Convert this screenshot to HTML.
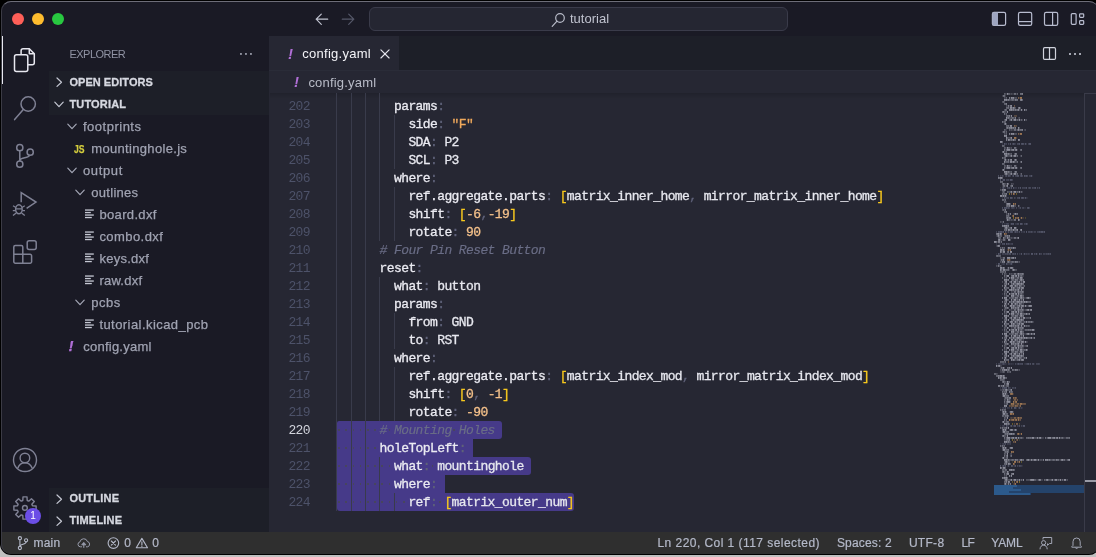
<!DOCTYPE html>
<html lang="en">
<head>
<meta charset="utf-8">
<title>config.yaml — tutorial</title>
<style>
*{box-sizing:border-box;margin:0;padding:0}
html,body{width:1096px;height:557px;overflow:hidden}
body{position:relative;background:linear-gradient(to bottom,#000 0,#000 300px,#c0c0c0 300px,#c0c0c0 557px);font-family:"Liberation Sans",sans-serif;font-size:13px;color:#c5c8d3;-webkit-font-smoothing:antialiased}
.abs{position:absolute}
#win{position:absolute;left:1px;top:1px;width:1098px;height:553px;border-radius:10px 10px 10px 10px;overflow:hidden;background:#262733;box-shadow:0 0 0 1px #000}
#winborder{position:absolute;left:1px;top:1px;width:1098px;height:553px;border-radius:10px;border-top:1px solid #6d6d78;border-left:1px solid #3b3b45;pointer-events:none}
/* all children of #win positioned relative to page coordinates by offsetting -1,-1 */
#pg{position:absolute;left:-1px;top:-1px;width:1096px;height:557px;will-change:transform}
#title{left:0;top:0;width:1096px;height:36px;background:#1a1a25}
.tl{position:absolute;top:13px;width:12px;height:12px;border-radius:50%}
#search{left:369px;top:7px;width:419px;height:24px;border:1px solid #3a3b4a;border-radius:6px;background:#252632}
#search span{position:absolute;left:200px;top:3px;font-size:13px;color:#c0c3cf}
#activity{left:0;top:36px;width:48px;height:496px;background:#1a1a25}
#side{left:48px;top:36px;width:221px;height:496px;background:#1a1a25}
.sechdr{position:absolute;left:49px;width:220px;height:22px;background:#1d1f28;font-size:11px;font-weight:bold;color:#d6d8e0;line-height:22px;letter-spacing:0.1px;-webkit-text-stroke:0.3px}
.sechdr span{position:absolute;left:20.400px}
.row{position:absolute;left:48px;width:222px;height:22px;line-height:22px;font-size:13px;color:#a0a3b2;white-space:nowrap;-webkit-text-stroke:0.25px}
.row span{position:absolute;top:0}
#tabbar{left:269px;top:36px;width:827px;height:34px;background:#1d1f28}
#tab{left:269px;top:36px;width:130px;height:34px;background:#262733}
#bread{left:269px;top:70px;width:827px;height:23px;background:#262733}
#editor{left:269px;top:93px;width:827px;height:439px;background:#262733;overflow:hidden}
#ed{position:absolute;left:-269px;top:-93px;width:1096px;height:557px;font-family:"Liberation Mono",monospace;font-size:13px;letter-spacing:-0.6px;line-height:18px}
.ln{position:absolute;left:269.5px;width:40.5px;text-align:right;color:#4d5269;height:18px;white-space:pre;transform:translateY(0.8px)}
.ln.cur{color:#d2d4dc}
.cl{position:absolute;height:18px;white-space:pre;color:#d4d6e0;transform:translateY(0.8px);-webkit-text-stroke:0.3px}
.k{color:#ebebf2}.g{color:#5f627a}.p{color:#e6e7ee}.s{color:#f0a95c}.n{color:#f4c08a}.b{color:#f7c81e}.c{color:#6a6d86;font-style:italic;-webkit-text-stroke:0.15px}
.ig{position:absolute;width:1px;height:18px;background:#393b4b}
.sel{position:absolute;left:336.5px;height:18px;background:#463a89;border-radius:3px}
.wd{position:absolute;width:1.8px;height:1.8px;background:#47455e}
#status{left:0;top:532px;width:1096px;height:22px;background:#2f2f2f;font-size:12px;color:#b4b9c9;line-height:22px;-webkit-text-stroke:0.2px}
#status span{position:absolute;top:0;white-space:nowrap}
svg{position:absolute;overflow:visible}
</style>
</head>
<body>
<div id="win"><div id="pg">

<!-- title bar -->
<div id="title" class="abs">
  <div class="tl" style="left:12px;background:#fe5f58"></div>
  <div class="tl" style="left:32px;background:#febc2e"></div>
  <div class="tl" style="left:52px;background:#28c840"></div>
  <svg style="left:314px;top:11px" width="16" height="16" viewBox="0 0 16 16" fill="none" stroke="#c0c3d0" stroke-width="1.2" stroke-linecap="round" stroke-linejoin="round"><path d="M7.300 3.100 2.200 8.200 7.300 13.300M2.200 8.200h11.500"/></svg>
  <svg style="left:340px;top:11px" width="16" height="16" viewBox="0 0 16 16" fill="none" stroke="#555869" stroke-width="1.2" stroke-linecap="round" stroke-linejoin="round"><path d="M8.700 3.100 13.800 8.200 8.700 13.300M13.800 8.200h-11.500"/></svg>
  <div id="search" class="abs">
    <svg style="left:181px;top:4px" width="16" height="16" viewBox="0 0 16 16" fill="none" stroke="#b8bbc8" stroke-width="1.2"><circle cx="9" cy="6" r="4.300"/><path d="M6 9.200 1.200 14.300" stroke-linecap="round"/></svg>
    <span>tutorial</span>
  </div>
  <!-- layout icons -->
  <svg style="left:991px;top:11px" width="16" height="16" viewBox="0 0 16 16" fill="none" stroke="#b9bdd0" stroke-width="1.2"><rect x="1.400" y="1.400" width="13.200" height="13" rx="1.600"/><path d="M1.400 2.600a1.200 1.200 0 0 1 1.200-1.200H7v13H2.600a1.200 1.200 0 0 1-1.200-1.200z" fill="#9ea5c0" stroke="none"/></svg>
  <svg style="left:1017px;top:11px" width="16" height="16" viewBox="0 0 16 16" fill="none" stroke="#b9bdd0" stroke-width="1.200"><rect x="1.500" y="1.400" width="13.200" height="13" rx="1.600"/><path d="M1.500 10.600h13.200"/></svg>
  <svg style="left:1043px;top:11px" width="16" height="16" viewBox="0 0 16 16" fill="none" stroke="#b9bdd0" stroke-width="1.200"><rect x="1.500" y="1.400" width="13.200" height="13" rx="1.600"/><path d="M9.600 1.400v13"/></svg>
  <svg style="left:1070px;top:11px" width="16" height="16" viewBox="0 0 16 16" fill="none" stroke="#b9bdd0" stroke-width="1.200"><rect x="1.300" y="2.600" width="4.800" height="10.700" rx="1"/><rect x="9.600" y="2.800" width="4.100" height="3.600" rx="0.800"/><rect x="9.600" y="9.700" width="4.100" height="3.600" rx="0.800"/></svg>
</div>

<!-- activity bar -->
<div id="activity" class="abs"></div>
<div class="abs" style="left:1px;top:36px;width:2px;height:48px;background:#e8e8f0"></div>
<!-- explorer icon -->
<svg style="left:12px;top:48px" width="24" height="24" viewBox="0 0 24 24" fill="none" stroke="#e8e8f0" stroke-width="1.500" stroke-linejoin="round"><path d="M9.100 6.800V2.800a2 2 0 0 1 2-2H17.300L22.300 5.800V14.700a2 2 0 0 1-2 2H15.800"/><path d="M17.300 0.800V5.800H22.300"/><rect x="2.500" y="6.800" width="13.300" height="16.800" rx="2"/></svg>
<!-- search icon -->
<svg style="left:12px;top:96px" width="24" height="24" viewBox="0 0 24 24" fill="none" stroke="#7f8194" stroke-width="1.500"><circle cx="16.200" cy="8" r="7.200"/><path d="M11.300 13.400 2.600 23.600" stroke-linecap="round"/></svg>
<!-- scm icon -->
<svg style="left:12px;top:144px" width="24" height="24" viewBox="0 0 24 24" fill="none" stroke="#7f8194" stroke-width="1.500"><circle cx="7.800" cy="3.700" r="3.100"/><circle cx="7.800" cy="20.200" r="3.100"/><circle cx="18.200" cy="8.200" r="3.100"/><path d="M7.800 6.800V17.100M17.600 11.300C16.600 14 12 13.500 9.600 14.700 8.500 15.300 7.800 16 7.800 17.100"/></svg>
<!-- debug icon -->
<svg style="left:12px;top:192px" width="24" height="24" viewBox="0 0 24 24" fill="none" stroke="#7f8194" stroke-width="1.500" stroke-linejoin="miter"><path d="M9.200 10.300V0.600L24 10 14.600 16.300"/><ellipse cx="6.900" cy="17.300" rx="3.300" ry="4.500" stroke-width="1.400"/><path d="M3.700 16.800H10.100M1 13.800 3.900 15.500M0.800 18.600H3.600M1 23.600 4.200 20.900M12.800 13.800 9.900 15.500M13 18.600H10.200M12.800 23.600 9.600 20.900" stroke-width="1.300"/></svg>
<!-- extensions icon -->
<svg style="left:12px;top:240px" width="24" height="24" viewBox="0 0 24 24" fill="none" stroke="#7f8194" stroke-width="1.500" stroke-linejoin="round"><path d="M3.300 5.400H9.300a1.500 1.500 0 0 1 1.500 1.500V14.300H18.100a1.500 1.500 0 0 1 1.500 1.500V21.700a1.500 1.500 0 0 1-1.500 1.500H3.300a1.500 1.500 0 0 1-1.500-1.500V6.900a1.500 1.500 0 0 1 1.500-1.500zM1.800 14.300H10.800V23.200"/><rect x="15.200" y="0.700" width="9" height="8.800" rx="2"/></svg>
<!-- account icon -->
<svg style="left:12px;top:448px" width="26" height="24" viewBox="0 0 26 24" fill="none" stroke="#7f8194" stroke-width="1.400"><circle cx="13" cy="12" r="11.500"/><circle cx="12.900" cy="10" r="4.800"/><path d="M5.600 20.600C7 16.800 10 14.800 12.900 14.800S18.800 16.800 20.400 20.600"/></svg>
<!-- gear icon -->
<svg style="left:12px;top:496px" width="26" height="24" viewBox="0 0 26 24" fill="none" stroke="#7f8194" stroke-width="1.400" stroke-linejoin="round"><circle cx="12.900" cy="11.900" r="2.400"/><path d="M10.80 4.52 11.00 0.880 15.00 0.880 15.20 4.520 16.730 5.150 19.450 2.720 22.280 5.550 19.850 8.270 20.480 9.800 24.120 10.00 24.120 14.00 20.480 14.200 19.850 15.730 22.280 18.450 19.450 21.280 16.730 18.850 15.200 19.480 15.00 23.120 11.00 23.120 10.80 19.480 9.270 18.850 6.550 21.280 3.720 18.450 6.150 15.730 5.520 14.200 1.880 14.00 1.880 10.00 5.520 9.800 6.150 8.270 3.720 5.550 6.550 2.720 9.270 5.150z"/></svg>
<div class="abs" style="left:25px;top:508px;width:16px;height:16px;border-radius:50%;background:#6b4ee6;color:#fff;font-size:10px;text-align:center;line-height:16px">1</div>

<!-- sidebar -->
<div id="side" class="abs"></div>
<div class="abs" style="left:69.400px;top:47px;font-size:11px;color:#9093a3;line-height:14px;letter-spacing:-0.500px">EXPLORER</div>
<svg style="left:238px;top:46px" width="16" height="16" viewBox="0 0 16 16" fill="#a9acba"><rect x="2.100" y="7.100" width="1.700" height="1.700"/><rect x="7.100" y="7.100" width="1.700" height="1.700"/><rect x="12.100" y="7.100" width="1.700" height="1.700"/></svg>

<div class="sechdr" style="top:71px"><span style="letter-spacing:0.050px">OPEN EDITORS</span></div>
<div class="sechdr" style="top:93px"><span style="letter-spacing:0.180px">TUTORIAL</span></div>
<div class="sechdr" style="top:488px;height:22px;line-height:21px"><span style="letter-spacing:0.240px">OUTLINE</span></div>
<div class="sechdr" style="top:510px;height:22px;line-height:21px"><span style="letter-spacing:0.180px">TIMELINE</span></div>
<!-- chevrons for headers -->
<svg style="left:51px;top:74px" width="16" height="16" viewBox="0 0 16 16" fill="none" stroke="#c5c8d3" stroke-width="1.200" stroke-linecap="round" stroke-linejoin="round"><path d="M6 4 10.500 8.200 6 12.400"/></svg>
<svg style="left:51px;top:96px" width="16" height="16" viewBox="0 0 16 16" fill="none" stroke="#c5c8d3" stroke-width="1.200" stroke-linecap="round" stroke-linejoin="round"><path d="M3.800 6.200 8 10.700 12.200 6.200"/></svg>
<svg style="left:51px;top:491px" width="16" height="16" viewBox="0 0 16 16" fill="none" stroke="#c5c8d3" stroke-width="1.200" stroke-linecap="round" stroke-linejoin="round"><path d="M6 4 10.500 8.200 6 12.400"/></svg>
<svg style="left:51px;top:513px" width="16" height="16" viewBox="0 0 16 16" fill="none" stroke="#c5c8d3" stroke-width="1.200" stroke-linecap="round" stroke-linejoin="round"><path d="M6 4 10.500 8.200 6 12.400"/></svg>

<!-- tree -->
<div class="row" style="top:116px"><span style="left:35px;letter-spacing:0.500px">footprints</span></div>
<div class="row" style="top:138px"><span style="left:25.500px;font-size:11px;font-weight:bold;color:#d4cd3e;transform:scaleX(0.780);transform-origin:0 50%">JS</span><span style="left:43.300px;letter-spacing:0.320px">mountinghole.js</span></div>
<div class="row" style="top:160px"><span style="left:35px;letter-spacing:0.630px">output</span></div>
<div class="row" style="top:182px"><span style="left:43.300px;letter-spacing:0.280px">outlines</span></div>
<div class="row" style="top:204px"><span style="left:51.400px;letter-spacing:0.350px">board.dxf</span></div>
<div class="row" style="top:226px"><span style="left:51.400px;letter-spacing:0.440px">combo.dxf</span></div>
<div class="row" style="top:248px"><span style="left:51.400px;letter-spacing:0.270px">keys.dxf</span></div>
<div class="row" style="top:270px"><span style="left:51.400px;letter-spacing:0.250px">raw.dxf</span></div>
<div class="row" style="top:292px"><span style="left:43.300px;letter-spacing:0.500px">pcbs</span></div>
<div class="row" style="top:314px"><span style="left:51.400px;letter-spacing:0.440px">tutorial.kicad_pcb</span></div>
<div class="row" style="top:336px"><span style="left:20.500px;top:-1px;color:#b06fd6;font-style:italic;font-weight:bold;font-size:15px">!</span><span style="left:35.300px;letter-spacing:0.230px">config.yaml</span></div>
<!-- tree chevrons -->
<svg style="left:64px;top:118px" width="16" height="16" viewBox="0 0 16 16" fill="none" stroke="#a4a7b6" stroke-width="1.200" stroke-linecap="round" stroke-linejoin="round"><path d="M3.800 6.200 8 10.700 12.200 6.200"/></svg>
<svg style="left:64px;top:162px" width="16" height="16" viewBox="0 0 16 16" fill="none" stroke="#a4a7b6" stroke-width="1.200" stroke-linecap="round" stroke-linejoin="round"><path d="M3.800 6.200 8 10.700 12.200 6.200"/></svg>
<svg style="left:72px;top:184px" width="16" height="16" viewBox="0 0 16 16" fill="none" stroke="#a4a7b6" stroke-width="1.200" stroke-linecap="round" stroke-linejoin="round"><path d="M3.800 6.200 8 10.700 12.200 6.200"/></svg>
<svg style="left:72px;top:294px" width="16" height="16" viewBox="0 0 16 16" fill="none" stroke="#a4a7b6" stroke-width="1.200" stroke-linecap="round" stroke-linejoin="round"><path d="M3.800 6.200 8 10.700 12.200 6.200"/></svg>
<!-- file icons (lines) -->
<svg style="left:84.500px;top:209px" width="10" height="10" viewBox="0 0 10 10" fill="#c5c8d3"><rect x="0" y="0.400" width="8.800" height="1.300"/><rect x="0" y="2.900" width="5.800" height="1.300"/><rect x="0" y="5.400" width="8.800" height="1.300"/><rect x="0" y="7.900" width="6.800" height="1.300"/></svg>
<svg style="left:84.500px;top:231px" width="10" height="10" viewBox="0 0 10 10" fill="#c5c8d3"><rect x="0" y="0.400" width="8.800" height="1.300"/><rect x="0" y="2.900" width="5.800" height="1.300"/><rect x="0" y="5.400" width="8.800" height="1.300"/><rect x="0" y="7.900" width="6.800" height="1.300"/></svg>
<svg style="left:84.500px;top:253px" width="10" height="10" viewBox="0 0 10 10" fill="#c5c8d3"><rect x="0" y="0.400" width="8.800" height="1.300"/><rect x="0" y="2.900" width="5.800" height="1.300"/><rect x="0" y="5.400" width="8.800" height="1.300"/><rect x="0" y="7.900" width="6.800" height="1.300"/></svg>
<svg style="left:84.500px;top:275px" width="10" height="10" viewBox="0 0 10 10" fill="#c5c8d3"><rect x="0" y="0.400" width="8.800" height="1.300"/><rect x="0" y="2.900" width="5.800" height="1.300"/><rect x="0" y="5.400" width="8.800" height="1.300"/><rect x="0" y="7.900" width="6.800" height="1.300"/></svg>
<svg style="left:84.500px;top:319px" width="10" height="10" viewBox="0 0 10 10" fill="#c5c8d3"><rect x="0" y="0.400" width="8.800" height="1.300"/><rect x="0" y="2.900" width="5.800" height="1.300"/><rect x="0" y="5.400" width="8.800" height="1.300"/><rect x="0" y="7.900" width="6.800" height="1.300"/></svg>

<!-- tab bar -->
<div id="tabbar" class="abs"></div>
<div id="tab" class="abs">
  <span class="abs" style="left:19px;top:9.500px;color:#b06fd6;font-style:italic;font-weight:bold;font-size:15px;line-height:16px">!</span>
  <span class="abs" style="left:33.300px;top:9px;color:#f4f4f8;font-size:13px;line-height:17px;letter-spacing:0.270px">config.yaml</span>
  <svg style="left:108px;top:10px" width="16" height="16" viewBox="0 0 16 16" fill="none" stroke="#e6e6ee" stroke-width="1.150" stroke-linecap="round"><path d="M3.900 3.800l8.200 8.200M12.100 3.800l-8.200 8.200"/></svg>
</div>
<svg style="left:1041px;top:45px" width="16" height="16" viewBox="0 0 16 16" fill="none" stroke="#d0d2dc" stroke-width="1.200"><rect x="2.500" y="2.700" width="12" height="11.700" rx="1.200"/><path d="M8.500 2.700v11.700"/></svg>
<svg style="left:1067px;top:46px" width="16" height="16" viewBox="0 0 16 16" fill="#c5c8d4"><rect x="2.100" y="7.100" width="1.800" height="1.800"/><rect x="7.100" y="7.100" width="1.800" height="1.800"/><rect x="12.100" y="7.100" width="1.800" height="1.800"/></svg>

<!-- breadcrumb -->
<div id="bread" class="abs">
  <span class="abs" style="left:25px;top:4px;color:#b06fd6;font-style:italic;font-weight:bold;font-size:15px;line-height:16px">!</span>
  <span class="abs" style="left:39.400px;top:4px;color:#b9bcc8;font-size:13px;line-height:17px;letter-spacing:0.200px">config.yaml</span>
</div>

<div class="abs" style="left:269px;top:70px;width:827px;height:1px;background:#2a2c38"></div>
<!-- editor -->
<div id="editor" class="abs"><div id="ed">
<div class="abs" style="left:270px;top:93px;width:814px;height:6px;background:linear-gradient(to bottom,rgba(0,0,0,0.14),rgba(0,0,0,0))"></div>
<div class="ig" style="left:336.1px;top:79px"></div>
<div class="ig" style="left:350.5px;top:79px"></div>
<div class="ig" style="left:364.9px;top:79px"></div>
<div class="ig" style="left:379.3px;top:79px"></div>
<div class="ig" style="left:336.1px;top:97px"></div>
<div class="ig" style="left:350.5px;top:97px"></div>
<div class="ig" style="left:364.9px;top:97px"></div>
<div class="ig" style="left:379.3px;top:97px"></div>
<div class="ln" style="top:97px">202</div>
<div class="cl" style="top:97px;left:394.0px"><span class="k">params</span><span class="g">:</span></div>
<div class="ig" style="left:336.1px;top:115px"></div>
<div class="ig" style="left:350.5px;top:115px"></div>
<div class="ig" style="left:364.9px;top:115px"></div>
<div class="ig" style="left:379.3px;top:115px"></div>
<div class="ig" style="left:393.7px;top:115px"></div>
<div class="ln" style="top:115px">203</div>
<div class="cl" style="top:115px;left:408.4px"><span class="k">side</span><span class="g">:</span><span class="p"> </span><span class="s">&quot;F&quot;</span></div>
<div class="ig" style="left:336.1px;top:133px"></div>
<div class="ig" style="left:350.5px;top:133px"></div>
<div class="ig" style="left:364.9px;top:133px"></div>
<div class="ig" style="left:379.3px;top:133px"></div>
<div class="ig" style="left:393.7px;top:133px"></div>
<div class="ln" style="top:133px">204</div>
<div class="cl" style="top:133px;left:408.4px"><span class="k">SDA</span><span class="g">:</span><span class="p"> P2</span></div>
<div class="ig" style="left:336.1px;top:151px"></div>
<div class="ig" style="left:350.5px;top:151px"></div>
<div class="ig" style="left:364.9px;top:151px"></div>
<div class="ig" style="left:379.3px;top:151px"></div>
<div class="ig" style="left:393.7px;top:151px"></div>
<div class="ln" style="top:151px">205</div>
<div class="cl" style="top:151px;left:408.4px"><span class="k">SCL</span><span class="g">:</span><span class="p"> P3</span></div>
<div class="ig" style="left:336.1px;top:169px"></div>
<div class="ig" style="left:350.5px;top:169px"></div>
<div class="ig" style="left:364.9px;top:169px"></div>
<div class="ig" style="left:379.3px;top:169px"></div>
<div class="ln" style="top:169px">206</div>
<div class="cl" style="top:169px;left:394.0px"><span class="k">where</span><span class="g">:</span></div>
<div class="ig" style="left:336.1px;top:187px"></div>
<div class="ig" style="left:350.5px;top:187px"></div>
<div class="ig" style="left:364.9px;top:187px"></div>
<div class="ig" style="left:379.3px;top:187px"></div>
<div class="ig" style="left:393.7px;top:187px"></div>
<div class="ln" style="top:187px">207</div>
<div class="cl" style="top:187px;left:408.4px"><span class="k">ref.aggregate.parts</span><span class="g">:</span><span class="p"> </span><span class="b">[</span><span class="p">matrix_inner_home</span><span class="g">,</span><span class="p"> mirror_matrix_inner_home</span><span class="b">]</span></div>
<div class="ig" style="left:336.1px;top:205px"></div>
<div class="ig" style="left:350.5px;top:205px"></div>
<div class="ig" style="left:364.9px;top:205px"></div>
<div class="ig" style="left:379.3px;top:205px"></div>
<div class="ig" style="left:393.7px;top:205px"></div>
<div class="ln" style="top:205px">208</div>
<div class="cl" style="top:205px;left:408.4px"><span class="k">shift</span><span class="g">:</span><span class="p"> </span><span class="b">[</span><span class="n">-6</span><span class="g">,</span><span class="n">-19</span><span class="b">]</span></div>
<div class="ig" style="left:336.1px;top:223px"></div>
<div class="ig" style="left:350.5px;top:223px"></div>
<div class="ig" style="left:364.9px;top:223px"></div>
<div class="ig" style="left:379.3px;top:223px"></div>
<div class="ig" style="left:393.7px;top:223px"></div>
<div class="ln" style="top:223px">209</div>
<div class="cl" style="top:223px;left:408.4px"><span class="k">rotate</span><span class="g">:</span><span class="p"> </span><span class="n">90</span></div>
<div class="ig" style="left:336.1px;top:241px"></div>
<div class="ig" style="left:350.5px;top:241px"></div>
<div class="ig" style="left:364.9px;top:241px"></div>
<div class="ln" style="top:241px">210</div>
<div class="cl" style="top:241px;left:379.6px"><span class="c"># Four Pin Reset Button</span></div>
<div class="ig" style="left:336.1px;top:259px"></div>
<div class="ig" style="left:350.5px;top:259px"></div>
<div class="ig" style="left:364.9px;top:259px"></div>
<div class="ln" style="top:259px">211</div>
<div class="cl" style="top:259px;left:379.6px"><span class="k">reset</span><span class="g">:</span></div>
<div class="ig" style="left:336.1px;top:277px"></div>
<div class="ig" style="left:350.5px;top:277px"></div>
<div class="ig" style="left:364.9px;top:277px"></div>
<div class="ig" style="left:379.3px;top:277px"></div>
<div class="ln" style="top:277px">212</div>
<div class="cl" style="top:277px;left:394.0px"><span class="k">what</span><span class="g">:</span><span class="p"> button</span></div>
<div class="ig" style="left:336.1px;top:295px"></div>
<div class="ig" style="left:350.5px;top:295px"></div>
<div class="ig" style="left:364.9px;top:295px"></div>
<div class="ig" style="left:379.3px;top:295px"></div>
<div class="ln" style="top:295px">213</div>
<div class="cl" style="top:295px;left:394.0px"><span class="k">params</span><span class="g">:</span></div>
<div class="ig" style="left:336.1px;top:313px"></div>
<div class="ig" style="left:350.5px;top:313px"></div>
<div class="ig" style="left:364.9px;top:313px"></div>
<div class="ig" style="left:379.3px;top:313px"></div>
<div class="ig" style="left:393.7px;top:313px"></div>
<div class="ln" style="top:313px">214</div>
<div class="cl" style="top:313px;left:408.4px"><span class="k">from</span><span class="g">:</span><span class="p"> GND</span></div>
<div class="ig" style="left:336.1px;top:331px"></div>
<div class="ig" style="left:350.5px;top:331px"></div>
<div class="ig" style="left:364.9px;top:331px"></div>
<div class="ig" style="left:379.3px;top:331px"></div>
<div class="ig" style="left:393.7px;top:331px"></div>
<div class="ln" style="top:331px">215</div>
<div class="cl" style="top:331px;left:408.4px"><span class="k">to</span><span class="g">:</span><span class="p"> RST</span></div>
<div class="ig" style="left:336.1px;top:349px"></div>
<div class="ig" style="left:350.5px;top:349px"></div>
<div class="ig" style="left:364.9px;top:349px"></div>
<div class="ig" style="left:379.3px;top:349px"></div>
<div class="ln" style="top:349px">216</div>
<div class="cl" style="top:349px;left:394.0px"><span class="k">where</span><span class="g">:</span></div>
<div class="ig" style="left:336.1px;top:367px"></div>
<div class="ig" style="left:350.5px;top:367px"></div>
<div class="ig" style="left:364.9px;top:367px"></div>
<div class="ig" style="left:379.3px;top:367px"></div>
<div class="ig" style="left:393.7px;top:367px"></div>
<div class="ln" style="top:367px">217</div>
<div class="cl" style="top:367px;left:408.4px"><span class="k">ref.aggregate.parts</span><span class="g">:</span><span class="p"> </span><span class="b">[</span><span class="p">matrix_index_mod</span><span class="g">,</span><span class="p"> mirror_matrix_index_mod</span><span class="b">]</span></div>
<div class="ig" style="left:336.1px;top:385px"></div>
<div class="ig" style="left:350.5px;top:385px"></div>
<div class="ig" style="left:364.9px;top:385px"></div>
<div class="ig" style="left:379.3px;top:385px"></div>
<div class="ig" style="left:393.7px;top:385px"></div>
<div class="ln" style="top:385px">218</div>
<div class="cl" style="top:385px;left:408.4px"><span class="k">shift</span><span class="g">:</span><span class="p"> </span><span class="b">[</span><span class="n">0</span><span class="g">,</span><span class="p"> </span><span class="n">-1</span><span class="b">]</span></div>
<div class="ig" style="left:336.1px;top:403px"></div>
<div class="ig" style="left:350.5px;top:403px"></div>
<div class="ig" style="left:364.9px;top:403px"></div>
<div class="ig" style="left:379.3px;top:403px"></div>
<div class="ig" style="left:393.7px;top:403px"></div>
<div class="ln" style="top:403px">219</div>
<div class="cl" style="top:403px;left:408.4px"><span class="k">rotate</span><span class="g">:</span><span class="p"> </span><span class="n">-90</span></div>
<div class="sel" style="top:421px;width:165.6px;border-radius:2px 3px 3px 0"></div>
<i class="wd" style="left:338.1px;top:429.1px"></i>
<i class="wd" style="left:345.3px;top:429.1px"></i>
<i class="wd" style="left:352.5px;top:429.1px"></i>
<i class="wd" style="left:359.7px;top:429.1px"></i>
<i class="wd" style="left:366.9px;top:429.1px"></i>
<i class="wd" style="left:374.1px;top:429.1px"></i>
<i class="wd" style="left:388.5px;top:429.1px"></i>
<i class="wd" style="left:453.3px;top:429.1px"></i>
<div class="ig" style="left:336.1px;top:421px"></div>
<div class="ig" style="left:350.5px;top:421px"></div>
<div class="ig" style="left:364.9px;top:421px"></div>
<div class="ln cur" style="top:421px">220</div>
<div class="cl" style="top:421px;left:379.6px"><span class="c"># Mounting Holes</span></div>
<div class="sel" style="top:439px;width:136.8px;border-radius:0"></div>
<i class="wd" style="left:338.1px;top:447.1px"></i>
<i class="wd" style="left:345.3px;top:447.1px"></i>
<i class="wd" style="left:352.5px;top:447.1px"></i>
<i class="wd" style="left:359.7px;top:447.1px"></i>
<i class="wd" style="left:366.9px;top:447.1px"></i>
<i class="wd" style="left:374.1px;top:447.1px"></i>
<div class="ig" style="left:336.1px;top:439px"></div>
<div class="ig" style="left:350.5px;top:439px"></div>
<div class="ig" style="left:364.9px;top:439px"></div>
<div class="ln" style="top:439px">221</div>
<div class="cl" style="top:439px;left:379.6px"><span class="k">holeTopLeft</span><span class="g">:</span></div>
<div class="sel" style="top:457px;width:194.4px;border-radius:0 3px 3px 0"></div>
<i class="wd" style="left:338.1px;top:465.1px"></i>
<i class="wd" style="left:345.3px;top:465.1px"></i>
<i class="wd" style="left:352.5px;top:465.1px"></i>
<i class="wd" style="left:359.7px;top:465.1px"></i>
<i class="wd" style="left:366.9px;top:465.1px"></i>
<i class="wd" style="left:374.1px;top:465.1px"></i>
<i class="wd" style="left:381.3px;top:465.1px"></i>
<i class="wd" style="left:388.5px;top:465.1px"></i>
<i class="wd" style="left:431.7px;top:465.1px"></i>
<div class="ig" style="left:336.1px;top:457px"></div>
<div class="ig" style="left:350.5px;top:457px"></div>
<div class="ig" style="left:364.9px;top:457px"></div>
<div class="ig" style="left:379.3px;top:457px"></div>
<div class="ln" style="top:457px">222</div>
<div class="cl" style="top:457px;left:394.0px"><span class="k">what</span><span class="g">:</span><span class="p"> mountinghole</span></div>
<div class="sel" style="top:475px;width:108.0px;border-radius:0"></div>
<i class="wd" style="left:338.1px;top:483.1px"></i>
<i class="wd" style="left:345.3px;top:483.1px"></i>
<i class="wd" style="left:352.5px;top:483.1px"></i>
<i class="wd" style="left:359.7px;top:483.1px"></i>
<i class="wd" style="left:366.9px;top:483.1px"></i>
<i class="wd" style="left:374.1px;top:483.1px"></i>
<i class="wd" style="left:381.3px;top:483.1px"></i>
<i class="wd" style="left:388.5px;top:483.1px"></i>
<div class="ig" style="left:336.1px;top:475px"></div>
<div class="ig" style="left:350.5px;top:475px"></div>
<div class="ig" style="left:364.9px;top:475px"></div>
<div class="ig" style="left:379.3px;top:475px"></div>
<div class="ln" style="top:475px">223</div>
<div class="cl" style="top:475px;left:394.0px"><span class="k">where</span><span class="g">:</span></div>
<div class="sel" style="top:493px;width:237.6px;border-radius:0 3px 3px 3px"></div>
<i class="wd" style="left:338.1px;top:501.1px"></i>
<i class="wd" style="left:345.3px;top:501.1px"></i>
<i class="wd" style="left:352.5px;top:501.1px"></i>
<i class="wd" style="left:359.7px;top:501.1px"></i>
<i class="wd" style="left:366.9px;top:501.1px"></i>
<i class="wd" style="left:374.1px;top:501.1px"></i>
<i class="wd" style="left:381.3px;top:501.1px"></i>
<i class="wd" style="left:388.5px;top:501.1px"></i>
<i class="wd" style="left:395.7px;top:501.1px"></i>
<i class="wd" style="left:402.9px;top:501.1px"></i>
<i class="wd" style="left:438.9px;top:501.1px"></i>
<div class="ig" style="left:336.1px;top:493px"></div>
<div class="ig" style="left:350.5px;top:493px"></div>
<div class="ig" style="left:364.9px;top:493px"></div>
<div class="ig" style="left:379.3px;top:493px"></div>
<div class="ig" style="left:393.7px;top:493px"></div>
<div class="ln" style="top:493px">224</div>
<div class="cl" style="top:493px;left:408.4px"><span class="k">ref</span><span class="g">:</span><span class="p"> </span><span class="b">[</span><span class="p">matrix_outer_num</span><span class="b">]</span></div>
</div></div>

<!-- minimap -->
<svg style="left:0;top:0" width="1096" height="557" viewBox="0 0 1096 557">
<rect x="994" y="483" width="90" height="10" fill="#2b3a55" opacity="0.0"/>
<rect x="994" y="485" width="90" height="8" fill="#24436b"/>
<rect x="994" y="493" width="37" height="2" fill="#24436b"/>
<defs><pattern id="mmn" x="994" y="93" width="41" height="18" patternUnits="userSpaceOnUse"><rect x="0" y="0" width="1" height="2" fill="#fff" opacity="0.6"/><rect x="1" y="0" width="1" height="2" fill="#fff" opacity="0.6"/><rect x="2" y="0" width="1" height="2" fill="#fff" opacity="0.6"/><rect x="3" y="0" width="1" height="2" fill="#fff" opacity="0.7"/><rect x="4" y="0" width="1" height="2" fill="#fff" opacity="0.55"/><rect x="5" y="0" width="1" height="2" fill="#fff" opacity="0.6"/><rect x="6" y="0" width="1" height="2" fill="#fff" opacity="0.55"/><rect x="7" y="0" width="1" height="2" fill="#fff" opacity="0.4"/><rect x="8" y="0" width="1" height="2" fill="#fff" opacity="0.6"/><rect x="9" y="0" width="1" height="2" fill="#fff" opacity="0.85"/><rect x="10" y="0" width="1" height="2" fill="#fff" opacity="0.55"/><rect x="11" y="0" width="1" height="2" fill="#fff" opacity="0.4"/><rect x="12" y="0" width="1" height="2" fill="#fff" opacity="0.25"/><rect x="13" y="0" width="1" height="2" fill="#fff" opacity="1.0"/><rect x="14" y="0" width="1" height="2" fill="#fff" opacity="0.6"/><rect x="15" y="0" width="1" height="2" fill="#fff" opacity="0.55"/><rect x="16" y="0" width="1" height="2" fill="#fff" opacity="0.25"/><rect x="17" y="0" width="1" height="2" fill="#fff" opacity="0.4"/><rect x="18" y="0" width="1" height="2" fill="#fff" opacity="0.25"/><rect x="19" y="0" width="1" height="2" fill="#fff" opacity="0.25"/><rect x="20" y="0" width="1" height="2" fill="#fff" opacity="0.7"/><rect x="21" y="0" width="1" height="2" fill="#fff" opacity="0.7"/><rect x="22" y="0" width="1" height="2" fill="#fff" opacity="0.25"/><rect x="23" y="0" width="1" height="2" fill="#fff" opacity="0.6"/><rect x="24" y="0" width="1" height="2" fill="#fff" opacity="1.0"/><rect x="25" y="0" width="1" height="2" fill="#fff" opacity="0.6"/><rect x="26" y="0" width="1" height="2" fill="#fff" opacity="0.7"/><rect x="27" y="0" width="1" height="2" fill="#fff" opacity="0.7"/><rect x="28" y="0" width="1" height="2" fill="#fff" opacity="0.85"/><rect x="29" y="0" width="1" height="2" fill="#fff" opacity="0.6"/><rect x="30" y="0" width="1" height="2" fill="#fff" opacity="0.25"/><rect x="31" y="0" width="1" height="2" fill="#fff" opacity="0.4"/><rect x="32" y="0" width="1" height="2" fill="#fff" opacity="0.6"/><rect x="33" y="0" width="1" height="2" fill="#fff" opacity="0.85"/><rect x="34" y="0" width="1" height="2" fill="#fff" opacity="1.0"/><rect x="35" y="0" width="1" height="2" fill="#fff" opacity="0.4"/><rect x="36" y="0" width="1" height="2" fill="#fff" opacity="0.85"/><rect x="37" y="0" width="1" height="2" fill="#fff" opacity="1.0"/><rect x="38" y="0" width="1" height="2" fill="#fff" opacity="0.7"/><rect x="39" y="0" width="1" height="2" fill="#fff" opacity="0.85"/><rect x="40" y="0" width="1" height="2" fill="#fff" opacity="0.25"/><rect x="0" y="2" width="1" height="2" fill="#fff" opacity="0.4"/><rect x="1" y="2" width="1" height="2" fill="#fff" opacity="0.4"/><rect x="2" y="2" width="1" height="2" fill="#fff" opacity="1.0"/><rect x="3" y="2" width="1" height="2" fill="#fff" opacity="0.4"/><rect x="4" y="2" width="1" height="2" fill="#fff" opacity="0.85"/><rect x="5" y="2" width="1" height="2" fill="#fff" opacity="1.0"/><rect x="6" y="2" width="1" height="2" fill="#fff" opacity="0.4"/><rect x="7" y="2" width="1" height="2" fill="#fff" opacity="0.25"/><rect x="8" y="2" width="1" height="2" fill="#fff" opacity="0.25"/><rect x="9" y="2" width="1" height="2" fill="#fff" opacity="0.7"/><rect x="10" y="2" width="1" height="2" fill="#fff" opacity="0.7"/><rect x="11" y="2" width="1" height="2" fill="#fff" opacity="0.25"/><rect x="12" y="2" width="1" height="2" fill="#fff" opacity="0.6"/><rect x="13" y="2" width="1" height="2" fill="#fff" opacity="1.0"/><rect x="14" y="2" width="1" height="2" fill="#fff" opacity="1.0"/><rect x="15" y="2" width="1" height="2" fill="#fff" opacity="1.0"/><rect x="16" y="2" width="1" height="2" fill="#fff" opacity="0.4"/><rect x="17" y="2" width="1" height="2" fill="#fff" opacity="0.7"/><rect x="18" y="2" width="1" height="2" fill="#fff" opacity="0.85"/><rect x="19" y="2" width="1" height="2" fill="#fff" opacity="1.0"/><rect x="20" y="2" width="1" height="2" fill="#fff" opacity="0.4"/><rect x="21" y="2" width="1" height="2" fill="#fff" opacity="0.85"/><rect x="22" y="2" width="1" height="2" fill="#fff" opacity="1.0"/><rect x="23" y="2" width="1" height="2" fill="#fff" opacity="0.25"/><rect x="24" y="2" width="1" height="2" fill="#fff" opacity="1.0"/><rect x="25" y="2" width="1" height="2" fill="#fff" opacity="0.4"/><rect x="26" y="2" width="1" height="2" fill="#fff" opacity="0.55"/><rect x="27" y="2" width="1" height="2" fill="#fff" opacity="0.7"/><rect x="28" y="2" width="1" height="2" fill="#fff" opacity="0.4"/><rect x="29" y="2" width="1" height="2" fill="#fff" opacity="0.25"/><rect x="30" y="2" width="1" height="2" fill="#fff" opacity="0.25"/><rect x="31" y="2" width="1" height="2" fill="#fff" opacity="0.6"/><rect x="32" y="2" width="1" height="2" fill="#fff" opacity="0.6"/><rect x="33" y="2" width="1" height="2" fill="#fff" opacity="0.55"/><rect x="34" y="2" width="1" height="2" fill="#fff" opacity="0.7"/><rect x="35" y="2" width="1" height="2" fill="#fff" opacity="0.6"/><rect x="36" y="2" width="1" height="2" fill="#fff" opacity="0.7"/><rect x="37" y="2" width="1" height="2" fill="#fff" opacity="0.55"/><rect x="38" y="2" width="1" height="2" fill="#fff" opacity="1.0"/><rect x="39" y="2" width="1" height="2" fill="#fff" opacity="1.0"/><rect x="40" y="2" width="1" height="2" fill="#fff" opacity="0.4"/><rect x="0" y="4" width="1" height="2" fill="#fff" opacity="1.0"/><rect x="1" y="4" width="1" height="2" fill="#fff" opacity="1.0"/><rect x="2" y="4" width="1" height="2" fill="#fff" opacity="0.7"/><rect x="3" y="4" width="1" height="2" fill="#fff" opacity="0.25"/><rect x="4" y="4" width="1" height="2" fill="#fff" opacity="0.85"/><rect x="5" y="4" width="1" height="2" fill="#fff" opacity="0.85"/><rect x="6" y="4" width="1" height="2" fill="#fff" opacity="0.25"/><rect x="7" y="4" width="1" height="2" fill="#fff" opacity="0.7"/><rect x="8" y="4" width="1" height="2" fill="#fff" opacity="0.55"/><rect x="9" y="4" width="1" height="2" fill="#fff" opacity="1.0"/><rect x="10" y="4" width="1" height="2" fill="#fff" opacity="0.4"/><rect x="11" y="4" width="1" height="2" fill="#fff" opacity="0.25"/><rect x="12" y="4" width="1" height="2" fill="#fff" opacity="0.55"/><rect x="13" y="4" width="1" height="2" fill="#fff" opacity="0.7"/><rect x="14" y="4" width="1" height="2" fill="#fff" opacity="0.6"/><rect x="15" y="4" width="1" height="2" fill="#fff" opacity="0.85"/><rect x="16" y="4" width="1" height="2" fill="#fff" opacity="0.25"/><rect x="17" y="4" width="1" height="2" fill="#fff" opacity="1.0"/><rect x="18" y="4" width="1" height="2" fill="#fff" opacity="0.85"/><rect x="19" y="4" width="1" height="2" fill="#fff" opacity="1.0"/><rect x="20" y="4" width="1" height="2" fill="#fff" opacity="0.4"/><rect x="21" y="4" width="1" height="2" fill="#fff" opacity="0.4"/><rect x="22" y="4" width="1" height="2" fill="#fff" opacity="0.4"/><rect x="23" y="4" width="1" height="2" fill="#fff" opacity="0.7"/><rect x="24" y="4" width="1" height="2" fill="#fff" opacity="0.7"/><rect x="25" y="4" width="1" height="2" fill="#fff" opacity="0.25"/><rect x="26" y="4" width="1" height="2" fill="#fff" opacity="1.0"/><rect x="27" y="4" width="1" height="2" fill="#fff" opacity="1.0"/><rect x="28" y="4" width="1" height="2" fill="#fff" opacity="0.6"/><rect x="29" y="4" width="1" height="2" fill="#fff" opacity="0.55"/><rect x="30" y="4" width="1" height="2" fill="#fff" opacity="0.6"/><rect x="31" y="4" width="1" height="2" fill="#fff" opacity="0.55"/><rect x="32" y="4" width="1" height="2" fill="#fff" opacity="1.0"/><rect x="33" y="4" width="1" height="2" fill="#fff" opacity="0.55"/><rect x="34" y="4" width="1" height="2" fill="#fff" opacity="0.55"/><rect x="35" y="4" width="1" height="2" fill="#fff" opacity="0.85"/><rect x="36" y="4" width="1" height="2" fill="#fff" opacity="0.7"/><rect x="37" y="4" width="1" height="2" fill="#fff" opacity="0.7"/><rect x="38" y="4" width="1" height="2" fill="#fff" opacity="0.7"/><rect x="39" y="4" width="1" height="2" fill="#fff" opacity="0.55"/><rect x="40" y="4" width="1" height="2" fill="#fff" opacity="0.7"/><rect x="0" y="6" width="1" height="2" fill="#fff" opacity="1.0"/><rect x="1" y="6" width="1" height="2" fill="#fff" opacity="0.6"/><rect x="2" y="6" width="1" height="2" fill="#fff" opacity="0.4"/><rect x="3" y="6" width="1" height="2" fill="#fff" opacity="1.0"/><rect x="4" y="6" width="1" height="2" fill="#fff" opacity="0.25"/><rect x="5" y="6" width="1" height="2" fill="#fff" opacity="0.4"/><rect x="6" y="6" width="1" height="2" fill="#fff" opacity="0.4"/><rect x="7" y="6" width="1" height="2" fill="#fff" opacity="0.25"/><rect x="8" y="6" width="1" height="2" fill="#fff" opacity="0.85"/><rect x="9" y="6" width="1" height="2" fill="#fff" opacity="0.7"/><rect x="10" y="6" width="1" height="2" fill="#fff" opacity="1.0"/><rect x="11" y="6" width="1" height="2" fill="#fff" opacity="0.85"/><rect x="12" y="6" width="1" height="2" fill="#fff" opacity="1.0"/><rect x="13" y="6" width="1" height="2" fill="#fff" opacity="0.6"/><rect x="14" y="6" width="1" height="2" fill="#fff" opacity="0.85"/><rect x="15" y="6" width="1" height="2" fill="#fff" opacity="0.55"/><rect x="16" y="6" width="1" height="2" fill="#fff" opacity="0.4"/><rect x="17" y="6" width="1" height="2" fill="#fff" opacity="0.55"/><rect x="18" y="6" width="1" height="2" fill="#fff" opacity="0.7"/><rect x="19" y="6" width="1" height="2" fill="#fff" opacity="0.6"/><rect x="20" y="6" width="1" height="2" fill="#fff" opacity="0.4"/><rect x="21" y="6" width="1" height="2" fill="#fff" opacity="0.85"/><rect x="22" y="6" width="1" height="2" fill="#fff" opacity="0.7"/><rect x="23" y="6" width="1" height="2" fill="#fff" opacity="0.7"/><rect x="24" y="6" width="1" height="2" fill="#fff" opacity="0.25"/><rect x="25" y="6" width="1" height="2" fill="#fff" opacity="0.4"/><rect x="26" y="6" width="1" height="2" fill="#fff" opacity="0.85"/><rect x="27" y="6" width="1" height="2" fill="#fff" opacity="1.0"/><rect x="28" y="6" width="1" height="2" fill="#fff" opacity="0.6"/><rect x="29" y="6" width="1" height="2" fill="#fff" opacity="0.7"/><rect x="30" y="6" width="1" height="2" fill="#fff" opacity="0.25"/><rect x="31" y="6" width="1" height="2" fill="#fff" opacity="0.25"/><rect x="32" y="6" width="1" height="2" fill="#fff" opacity="0.55"/><rect x="33" y="6" width="1" height="2" fill="#fff" opacity="0.85"/><rect x="34" y="6" width="1" height="2" fill="#fff" opacity="1.0"/><rect x="35" y="6" width="1" height="2" fill="#fff" opacity="0.55"/><rect x="36" y="6" width="1" height="2" fill="#fff" opacity="0.4"/><rect x="37" y="6" width="1" height="2" fill="#fff" opacity="1.0"/><rect x="38" y="6" width="1" height="2" fill="#fff" opacity="0.55"/><rect x="39" y="6" width="1" height="2" fill="#fff" opacity="0.6"/><rect x="40" y="6" width="1" height="2" fill="#fff" opacity="1.0"/><rect x="0" y="8" width="1" height="2" fill="#fff" opacity="0.55"/><rect x="1" y="8" width="1" height="2" fill="#fff" opacity="0.25"/><rect x="2" y="8" width="1" height="2" fill="#fff" opacity="0.25"/><rect x="3" y="8" width="1" height="2" fill="#fff" opacity="0.6"/><rect x="4" y="8" width="1" height="2" fill="#fff" opacity="1.0"/><rect x="5" y="8" width="1" height="2" fill="#fff" opacity="0.85"/><rect x="6" y="8" width="1" height="2" fill="#fff" opacity="0.25"/><rect x="7" y="8" width="1" height="2" fill="#fff" opacity="0.25"/><rect x="8" y="8" width="1" height="2" fill="#fff" opacity="0.4"/><rect x="9" y="8" width="1" height="2" fill="#fff" opacity="0.6"/><rect x="10" y="8" width="1" height="2" fill="#fff" opacity="0.4"/><rect x="11" y="8" width="1" height="2" fill="#fff" opacity="0.85"/><rect x="12" y="8" width="1" height="2" fill="#fff" opacity="1.0"/><rect x="13" y="8" width="1" height="2" fill="#fff" opacity="0.55"/><rect x="14" y="8" width="1" height="2" fill="#fff" opacity="0.4"/><rect x="15" y="8" width="1" height="2" fill="#fff" opacity="0.4"/><rect x="16" y="8" width="1" height="2" fill="#fff" opacity="0.6"/><rect x="17" y="8" width="1" height="2" fill="#fff" opacity="1.0"/><rect x="18" y="8" width="1" height="2" fill="#fff" opacity="0.25"/><rect x="19" y="8" width="1" height="2" fill="#fff" opacity="0.55"/><rect x="20" y="8" width="1" height="2" fill="#fff" opacity="1.0"/><rect x="21" y="8" width="1" height="2" fill="#fff" opacity="1.0"/><rect x="22" y="8" width="1" height="2" fill="#fff" opacity="0.4"/><rect x="23" y="8" width="1" height="2" fill="#fff" opacity="0.6"/><rect x="24" y="8" width="1" height="2" fill="#fff" opacity="0.4"/><rect x="25" y="8" width="1" height="2" fill="#fff" opacity="1.0"/><rect x="26" y="8" width="1" height="2" fill="#fff" opacity="0.25"/><rect x="27" y="8" width="1" height="2" fill="#fff" opacity="0.6"/><rect x="28" y="8" width="1" height="2" fill="#fff" opacity="0.25"/><rect x="29" y="8" width="1" height="2" fill="#fff" opacity="1.0"/><rect x="30" y="8" width="1" height="2" fill="#fff" opacity="1.0"/><rect x="31" y="8" width="1" height="2" fill="#fff" opacity="0.25"/><rect x="32" y="8" width="1" height="2" fill="#fff" opacity="0.4"/><rect x="33" y="8" width="1" height="2" fill="#fff" opacity="0.4"/><rect x="34" y="8" width="1" height="2" fill="#fff" opacity="0.4"/><rect x="35" y="8" width="1" height="2" fill="#fff" opacity="0.4"/><rect x="36" y="8" width="1" height="2" fill="#fff" opacity="0.85"/><rect x="37" y="8" width="1" height="2" fill="#fff" opacity="1.0"/><rect x="38" y="8" width="1" height="2" fill="#fff" opacity="1.0"/><rect x="39" y="8" width="1" height="2" fill="#fff" opacity="1.0"/><rect x="40" y="8" width="1" height="2" fill="#fff" opacity="0.6"/><rect x="0" y="10" width="1" height="2" fill="#fff" opacity="0.6"/><rect x="1" y="10" width="1" height="2" fill="#fff" opacity="0.6"/><rect x="2" y="10" width="1" height="2" fill="#fff" opacity="0.4"/><rect x="3" y="10" width="1" height="2" fill="#fff" opacity="0.25"/><rect x="4" y="10" width="1" height="2" fill="#fff" opacity="0.85"/><rect x="5" y="10" width="1" height="2" fill="#fff" opacity="0.4"/><rect x="6" y="10" width="1" height="2" fill="#fff" opacity="0.6"/><rect x="7" y="10" width="1" height="2" fill="#fff" opacity="0.25"/><rect x="8" y="10" width="1" height="2" fill="#fff" opacity="0.7"/><rect x="9" y="10" width="1" height="2" fill="#fff" opacity="0.4"/><rect x="10" y="10" width="1" height="2" fill="#fff" opacity="0.6"/><rect x="11" y="10" width="1" height="2" fill="#fff" opacity="0.6"/><rect x="12" y="10" width="1" height="2" fill="#fff" opacity="0.85"/><rect x="13" y="10" width="1" height="2" fill="#fff" opacity="0.25"/><rect x="14" y="10" width="1" height="2" fill="#fff" opacity="1.0"/><rect x="15" y="10" width="1" height="2" fill="#fff" opacity="0.85"/><rect x="16" y="10" width="1" height="2" fill="#fff" opacity="0.55"/><rect x="17" y="10" width="1" height="2" fill="#fff" opacity="0.7"/><rect x="18" y="10" width="1" height="2" fill="#fff" opacity="0.55"/><rect x="19" y="10" width="1" height="2" fill="#fff" opacity="1.0"/><rect x="20" y="10" width="1" height="2" fill="#fff" opacity="0.6"/><rect x="21" y="10" width="1" height="2" fill="#fff" opacity="0.6"/><rect x="22" y="10" width="1" height="2" fill="#fff" opacity="0.7"/><rect x="23" y="10" width="1" height="2" fill="#fff" opacity="1.0"/><rect x="24" y="10" width="1" height="2" fill="#fff" opacity="1.0"/><rect x="25" y="10" width="1" height="2" fill="#fff" opacity="0.85"/><rect x="26" y="10" width="1" height="2" fill="#fff" opacity="0.7"/><rect x="27" y="10" width="1" height="2" fill="#fff" opacity="1.0"/><rect x="28" y="10" width="1" height="2" fill="#fff" opacity="0.7"/><rect x="29" y="10" width="1" height="2" fill="#fff" opacity="0.7"/><rect x="30" y="10" width="1" height="2" fill="#fff" opacity="1.0"/><rect x="31" y="10" width="1" height="2" fill="#fff" opacity="0.7"/><rect x="32" y="10" width="1" height="2" fill="#fff" opacity="1.0"/><rect x="33" y="10" width="1" height="2" fill="#fff" opacity="0.7"/><rect x="34" y="10" width="1" height="2" fill="#fff" opacity="0.55"/><rect x="35" y="10" width="1" height="2" fill="#fff" opacity="0.55"/><rect x="36" y="10" width="1" height="2" fill="#fff" opacity="0.6"/><rect x="37" y="10" width="1" height="2" fill="#fff" opacity="1.0"/><rect x="38" y="10" width="1" height="2" fill="#fff" opacity="0.25"/><rect x="39" y="10" width="1" height="2" fill="#fff" opacity="0.4"/><rect x="40" y="10" width="1" height="2" fill="#fff" opacity="0.85"/><rect x="0" y="12" width="1" height="2" fill="#fff" opacity="0.55"/><rect x="1" y="12" width="1" height="2" fill="#fff" opacity="0.4"/><rect x="2" y="12" width="1" height="2" fill="#fff" opacity="0.6"/><rect x="3" y="12" width="1" height="2" fill="#fff" opacity="0.6"/><rect x="4" y="12" width="1" height="2" fill="#fff" opacity="0.85"/><rect x="5" y="12" width="1" height="2" fill="#fff" opacity="0.7"/><rect x="6" y="12" width="1" height="2" fill="#fff" opacity="1.0"/><rect x="7" y="12" width="1" height="2" fill="#fff" opacity="1.0"/><rect x="8" y="12" width="1" height="2" fill="#fff" opacity="0.6"/><rect x="9" y="12" width="1" height="2" fill="#fff" opacity="1.0"/><rect x="10" y="12" width="1" height="2" fill="#fff" opacity="0.6"/><rect x="11" y="12" width="1" height="2" fill="#fff" opacity="1.0"/><rect x="12" y="12" width="1" height="2" fill="#fff" opacity="0.4"/><rect x="13" y="12" width="1" height="2" fill="#fff" opacity="0.25"/><rect x="14" y="12" width="1" height="2" fill="#fff" opacity="0.85"/><rect x="15" y="12" width="1" height="2" fill="#fff" opacity="0.25"/><rect x="16" y="12" width="1" height="2" fill="#fff" opacity="0.85"/><rect x="17" y="12" width="1" height="2" fill="#fff" opacity="1.0"/><rect x="18" y="12" width="1" height="2" fill="#fff" opacity="0.85"/><rect x="19" y="12" width="1" height="2" fill="#fff" opacity="0.25"/><rect x="20" y="12" width="1" height="2" fill="#fff" opacity="0.55"/><rect x="21" y="12" width="1" height="2" fill="#fff" opacity="1.0"/><rect x="22" y="12" width="1" height="2" fill="#fff" opacity="0.6"/><rect x="23" y="12" width="1" height="2" fill="#fff" opacity="0.7"/><rect x="24" y="12" width="1" height="2" fill="#fff" opacity="0.25"/><rect x="25" y="12" width="1" height="2" fill="#fff" opacity="0.85"/><rect x="26" y="12" width="1" height="2" fill="#fff" opacity="0.7"/><rect x="27" y="12" width="1" height="2" fill="#fff" opacity="0.55"/><rect x="28" y="12" width="1" height="2" fill="#fff" opacity="0.25"/><rect x="29" y="12" width="1" height="2" fill="#fff" opacity="0.4"/><rect x="30" y="12" width="1" height="2" fill="#fff" opacity="0.6"/><rect x="31" y="12" width="1" height="2" fill="#fff" opacity="0.4"/><rect x="32" y="12" width="1" height="2" fill="#fff" opacity="1.0"/><rect x="33" y="12" width="1" height="2" fill="#fff" opacity="0.4"/><rect x="34" y="12" width="1" height="2" fill="#fff" opacity="0.7"/><rect x="35" y="12" width="1" height="2" fill="#fff" opacity="0.7"/><rect x="36" y="12" width="1" height="2" fill="#fff" opacity="0.6"/><rect x="37" y="12" width="1" height="2" fill="#fff" opacity="0.85"/><rect x="38" y="12" width="1" height="2" fill="#fff" opacity="0.55"/><rect x="39" y="12" width="1" height="2" fill="#fff" opacity="0.25"/><rect x="40" y="12" width="1" height="2" fill="#fff" opacity="0.6"/><rect x="0" y="14" width="1" height="2" fill="#fff" opacity="0.25"/><rect x="1" y="14" width="1" height="2" fill="#fff" opacity="0.55"/><rect x="2" y="14" width="1" height="2" fill="#fff" opacity="0.7"/><rect x="3" y="14" width="1" height="2" fill="#fff" opacity="0.85"/><rect x="4" y="14" width="1" height="2" fill="#fff" opacity="1.0"/><rect x="5" y="14" width="1" height="2" fill="#fff" opacity="0.55"/><rect x="6" y="14" width="1" height="2" fill="#fff" opacity="1.0"/><rect x="7" y="14" width="1" height="2" fill="#fff" opacity="0.7"/><rect x="8" y="14" width="1" height="2" fill="#fff" opacity="0.4"/><rect x="9" y="14" width="1" height="2" fill="#fff" opacity="1.0"/><rect x="10" y="14" width="1" height="2" fill="#fff" opacity="1.0"/><rect x="11" y="14" width="1" height="2" fill="#fff" opacity="0.55"/><rect x="12" y="14" width="1" height="2" fill="#fff" opacity="0.6"/><rect x="13" y="14" width="1" height="2" fill="#fff" opacity="0.6"/><rect x="14" y="14" width="1" height="2" fill="#fff" opacity="0.7"/><rect x="15" y="14" width="1" height="2" fill="#fff" opacity="0.25"/><rect x="16" y="14" width="1" height="2" fill="#fff" opacity="1.0"/><rect x="17" y="14" width="1" height="2" fill="#fff" opacity="1.0"/><rect x="18" y="14" width="1" height="2" fill="#fff" opacity="0.6"/><rect x="19" y="14" width="1" height="2" fill="#fff" opacity="1.0"/><rect x="20" y="14" width="1" height="2" fill="#fff" opacity="0.7"/><rect x="21" y="14" width="1" height="2" fill="#fff" opacity="0.4"/><rect x="22" y="14" width="1" height="2" fill="#fff" opacity="0.4"/><rect x="23" y="14" width="1" height="2" fill="#fff" opacity="0.7"/><rect x="24" y="14" width="1" height="2" fill="#fff" opacity="0.7"/><rect x="25" y="14" width="1" height="2" fill="#fff" opacity="1.0"/><rect x="26" y="14" width="1" height="2" fill="#fff" opacity="0.4"/><rect x="27" y="14" width="1" height="2" fill="#fff" opacity="0.85"/><rect x="28" y="14" width="1" height="2" fill="#fff" opacity="1.0"/><rect x="29" y="14" width="1" height="2" fill="#fff" opacity="0.85"/><rect x="30" y="14" width="1" height="2" fill="#fff" opacity="0.25"/><rect x="31" y="14" width="1" height="2" fill="#fff" opacity="1.0"/><rect x="32" y="14" width="1" height="2" fill="#fff" opacity="0.4"/><rect x="33" y="14" width="1" height="2" fill="#fff" opacity="0.25"/><rect x="34" y="14" width="1" height="2" fill="#fff" opacity="0.6"/><rect x="35" y="14" width="1" height="2" fill="#fff" opacity="1.0"/><rect x="36" y="14" width="1" height="2" fill="#fff" opacity="1.0"/><rect x="37" y="14" width="1" height="2" fill="#fff" opacity="0.85"/><rect x="38" y="14" width="1" height="2" fill="#fff" opacity="0.6"/><rect x="39" y="14" width="1" height="2" fill="#fff" opacity="0.25"/><rect x="40" y="14" width="1" height="2" fill="#fff" opacity="0.7"/><rect x="0" y="16" width="1" height="2" fill="#fff" opacity="0.4"/><rect x="1" y="16" width="1" height="2" fill="#fff" opacity="1.0"/><rect x="2" y="16" width="1" height="2" fill="#fff" opacity="0.25"/><rect x="3" y="16" width="1" height="2" fill="#fff" opacity="0.55"/><rect x="4" y="16" width="1" height="2" fill="#fff" opacity="1.0"/><rect x="5" y="16" width="1" height="2" fill="#fff" opacity="0.55"/><rect x="6" y="16" width="1" height="2" fill="#fff" opacity="0.6"/><rect x="7" y="16" width="1" height="2" fill="#fff" opacity="0.55"/><rect x="8" y="16" width="1" height="2" fill="#fff" opacity="0.6"/><rect x="9" y="16" width="1" height="2" fill="#fff" opacity="0.6"/><rect x="10" y="16" width="1" height="2" fill="#fff" opacity="0.4"/><rect x="11" y="16" width="1" height="2" fill="#fff" opacity="0.7"/><rect x="12" y="16" width="1" height="2" fill="#fff" opacity="0.6"/><rect x="13" y="16" width="1" height="2" fill="#fff" opacity="0.85"/><rect x="14" y="16" width="1" height="2" fill="#fff" opacity="0.55"/><rect x="15" y="16" width="1" height="2" fill="#fff" opacity="0.85"/><rect x="16" y="16" width="1" height="2" fill="#fff" opacity="0.85"/><rect x="17" y="16" width="1" height="2" fill="#fff" opacity="1.0"/><rect x="18" y="16" width="1" height="2" fill="#fff" opacity="0.7"/><rect x="19" y="16" width="1" height="2" fill="#fff" opacity="0.85"/><rect x="20" y="16" width="1" height="2" fill="#fff" opacity="0.55"/><rect x="21" y="16" width="1" height="2" fill="#fff" opacity="0.85"/><rect x="22" y="16" width="1" height="2" fill="#fff" opacity="0.6"/><rect x="23" y="16" width="1" height="2" fill="#fff" opacity="0.7"/><rect x="24" y="16" width="1" height="2" fill="#fff" opacity="1.0"/><rect x="25" y="16" width="1" height="2" fill="#fff" opacity="0.4"/><rect x="26" y="16" width="1" height="2" fill="#fff" opacity="0.25"/><rect x="27" y="16" width="1" height="2" fill="#fff" opacity="1.0"/><rect x="28" y="16" width="1" height="2" fill="#fff" opacity="0.25"/><rect x="29" y="16" width="1" height="2" fill="#fff" opacity="0.25"/><rect x="30" y="16" width="1" height="2" fill="#fff" opacity="1.0"/><rect x="31" y="16" width="1" height="2" fill="#fff" opacity="0.4"/><rect x="32" y="16" width="1" height="2" fill="#fff" opacity="0.6"/><rect x="33" y="16" width="1" height="2" fill="#fff" opacity="0.4"/><rect x="34" y="16" width="1" height="2" fill="#fff" opacity="0.55"/><rect x="35" y="16" width="1" height="2" fill="#fff" opacity="0.4"/><rect x="36" y="16" width="1" height="2" fill="#fff" opacity="0.6"/><rect x="37" y="16" width="1" height="2" fill="#fff" opacity="1.0"/><rect x="38" y="16" width="1" height="2" fill="#fff" opacity="1.0"/><rect x="39" y="16" width="1" height="2" fill="#fff" opacity="0.85"/><rect x="40" y="16" width="1" height="2" fill="#fff" opacity="0.7"/></pattern><mask id="mmk" maskUnits="userSpaceOnUse" x="994" y="93" width="90" height="410"><rect x="994" y="93" width="90" height="410" fill="url(#mmn)"/></mask></defs>
<g mask="url(#mmk)">
<rect x="1004" y="93.2" width="14" height="1.5" fill="#c9ccd8" opacity="0.78"/>
<rect x="1020" y="93.2" width="3" height="1.5" fill="#c9ccd8" opacity="0.78"/>
<rect x="1002" y="95.2" width="4" height="1.5" fill="#c9ccd8" opacity="0.78"/>
<rect x="1004" y="97.2" width="3" height="1.5" fill="#c9ccd8" opacity="0.78"/>
<rect x="1009" y="97.2" width="8" height="1.5" fill="#c9ccd8" opacity="0.78"/>
<rect x="1018" y="97.2" width="4" height="1.5" fill="#e9a968" opacity="0.75"/>
<rect x="1004" y="99.2" width="14" height="1.5" fill="#c9ccd8" opacity="0.78"/>
<rect x="1020" y="99.2" width="3" height="1.5" fill="#c9ccd8" opacity="0.78"/>
<rect x="1002" y="101.2" width="3" height="1.5" fill="#c9ccd8" opacity="0.78"/>
<rect x="1004" y="103.2" width="3" height="1.5" fill="#c9ccd8" opacity="0.78"/>
<rect x="1006" y="105.2" width="6" height="1.5" fill="#c9ccd8" opacity="0.78"/>
<rect x="1014" y="105.2" width="1" height="1.5" fill="#e9a968" opacity="0.75"/>
<rect x="1006" y="107.2" width="10" height="1.5" fill="#c9ccd8" opacity="0.78"/>
<rect x="1018" y="107.2" width="3" height="1.5" fill="#c9ccd8" opacity="0.78"/>
<rect x="1004" y="109.2" width="3" height="1.5" fill="#c9ccd8" opacity="0.78"/>
<rect x="1009" y="109.2" width="14" height="1.5" fill="#c9ccd8" opacity="0.78"/>
<rect x="1024" y="109.2" width="3" height="1.5" fill="#c9ccd8" opacity="0.78"/>
<rect x="1002" y="111.2" width="6" height="1.5" fill="#c9ccd8" opacity="0.78"/>
<rect x="1004" y="113.2" width="3" height="1.5" fill="#c9ccd8" opacity="0.78"/>
<rect x="1006" y="115.2" width="6" height="1.5" fill="#c9ccd8" opacity="0.78"/>
<rect x="1014" y="115.2" width="3" height="1.5" fill="#e9a968" opacity="0.75"/>
<rect x="1006" y="117.2" width="10" height="1.5" fill="#c9ccd8" opacity="0.78"/>
<rect x="1018" y="117.2" width="2" height="1.5" fill="#c9ccd8" opacity="0.78"/>
<rect x="1004" y="119.2" width="3" height="1.5" fill="#c9ccd8" opacity="0.78"/>
<rect x="1009" y="119.2" width="14" height="1.5" fill="#c9ccd8" opacity="0.78"/>
<rect x="1024" y="119.2" width="3" height="1.5" fill="#c9ccd8" opacity="0.78"/>
<rect x="1002" y="121.2" width="4" height="1.5" fill="#c9ccd8" opacity="0.78"/>
<rect x="1004" y="123.2" width="3" height="1.5" fill="#c9ccd8" opacity="0.78"/>
<rect x="1006" y="125.2" width="6" height="1.5" fill="#c9ccd8" opacity="0.78"/>
<rect x="1014" y="125.2" width="3" height="1.5" fill="#e9a968" opacity="0.75"/>
<rect x="1006" y="127.2" width="10" height="1.5" fill="#c9ccd8" opacity="0.78"/>
<rect x="1018" y="127.2" width="2" height="1.5" fill="#c9ccd8" opacity="0.78"/>
<rect x="1004" y="129.2" width="3" height="1.5" fill="#c9ccd8" opacity="0.78"/>
<rect x="1009" y="129.2" width="14" height="1.5" fill="#c9ccd8" opacity="0.78"/>
<rect x="1024" y="129.2" width="2" height="1.5" fill="#c9ccd8" opacity="0.78"/>
<rect x="1002" y="131.2" width="5" height="1.5" fill="#c9ccd8" opacity="0.78"/>
<rect x="1004" y="133.2" width="3" height="1.5" fill="#c9ccd8" opacity="0.78"/>
<rect x="1009" y="133.2" width="8" height="1.5" fill="#c9ccd8" opacity="0.78"/>
<rect x="1018" y="133.2" width="4" height="1.5" fill="#e9a968" opacity="0.75"/>
<rect x="1004" y="135.2" width="3" height="1.5" fill="#c9ccd8" opacity="0.78"/>
<rect x="1006" y="137.2" width="6" height="1.5" fill="#c9ccd8" opacity="0.78"/>
<rect x="1014" y="137.2" width="3" height="1.5" fill="#e9a968" opacity="0.75"/>
<rect x="1006" y="139.2" width="10" height="1.5" fill="#c9ccd8" opacity="0.78"/>
<rect x="1018" y="139.2" width="2" height="1.5" fill="#c9ccd8" opacity="0.78"/>
<rect x="1000" y="141.2" width="3" height="1.5" fill="#c9ccd8" opacity="0.78"/>
<rect x="1002" y="143.2" width="1" height="1.5" fill="#70758c" opacity="0.75"/>
<rect x="1004" y="143.2" width="3" height="1.5" fill="#70758c" opacity="0.75"/>
<rect x="1008" y="143.2" width="3" height="1.5" fill="#70758c" opacity="0.75"/>
<rect x="1012" y="143.2" width="4" height="1.5" fill="#70758c" opacity="0.75"/>
<rect x="1017" y="143.2" width="3" height="1.5" fill="#70758c" opacity="0.75"/>
<rect x="1021" y="143.2" width="6" height="1.5" fill="#70758c" opacity="0.75"/>
<rect x="1028" y="143.2" width="3" height="1.5" fill="#70758c" opacity="0.75"/>
<rect x="1002" y="145.2" width="3" height="1.5" fill="#c9ccd8" opacity="0.78"/>
<rect x="1004" y="147.2" width="8" height="1.5" fill="#c9ccd8" opacity="0.78"/>
<rect x="1014" y="147.2" width="3" height="1.5" fill="#c9ccd8" opacity="0.78"/>
<rect x="1004" y="149.2" width="14" height="1.5" fill="#c9ccd8" opacity="0.78"/>
<rect x="1020" y="149.2" width="2" height="1.5" fill="#c9ccd8" opacity="0.78"/>
<rect x="1002" y="151.2" width="5" height="1.5" fill="#c9ccd8" opacity="0.78"/>
<rect x="1004" y="153.2" width="8" height="1.5" fill="#c9ccd8" opacity="0.78"/>
<rect x="1014" y="153.2" width="3" height="1.5" fill="#c9ccd8" opacity="0.78"/>
<rect x="1004" y="155.2" width="14" height="1.5" fill="#c9ccd8" opacity="0.78"/>
<rect x="1020" y="155.2" width="2" height="1.5" fill="#c9ccd8" opacity="0.78"/>
<rect x="1002" y="157.2" width="4" height="1.5" fill="#c9ccd8" opacity="0.78"/>
<rect x="1004" y="159.2" width="8" height="1.5" fill="#c9ccd8" opacity="0.78"/>
<rect x="1014" y="159.2" width="3" height="1.5" fill="#c9ccd8" opacity="0.78"/>
<rect x="1004" y="161.2" width="14" height="1.5" fill="#c9ccd8" opacity="0.78"/>
<rect x="1020" y="161.2" width="2" height="1.5" fill="#c9ccd8" opacity="0.78"/>
<rect x="1002" y="163.2" width="3" height="1.5" fill="#c9ccd8" opacity="0.78"/>
<rect x="1004" y="165.2" width="8" height="1.5" fill="#c9ccd8" opacity="0.78"/>
<rect x="1014" y="165.2" width="3" height="1.5" fill="#c9ccd8" opacity="0.78"/>
<rect x="1004" y="167.2" width="14" height="1.5" fill="#c9ccd8" opacity="0.78"/>
<rect x="1020" y="167.2" width="2" height="1.5" fill="#c9ccd8" opacity="0.78"/>
<rect x="1002" y="169.2" width="3" height="1.5" fill="#c9ccd8" opacity="0.78"/>
<rect x="1004" y="171.2" width="8" height="1.5" fill="#c9ccd8" opacity="0.78"/>
<rect x="1014" y="171.2" width="3" height="1.5" fill="#c9ccd8" opacity="0.78"/>
<rect x="1004" y="173.2" width="14" height="1.5" fill="#c9ccd8" opacity="0.78"/>
<rect x="1020" y="173.2" width="2" height="1.5" fill="#c9ccd8" opacity="0.78"/>
<rect x="998" y="175.2" width="1" height="1.5" fill="#70758c" opacity="0.75"/>
<rect x="1000" y="175.2" width="4" height="1.5" fill="#70758c" opacity="0.75"/>
<rect x="1005" y="175.2" width="6" height="1.5" fill="#70758c" opacity="0.75"/>
<rect x="1012" y="175.2" width="2" height="1.5" fill="#70758c" opacity="0.75"/>
<rect x="1015" y="175.2" width="4" height="1.5" fill="#70758c" opacity="0.75"/>
<rect x="1020" y="175.2" width="3" height="1.5" fill="#70758c" opacity="0.75"/>
<rect x="1024" y="175.2" width="4" height="1.5" fill="#70758c" opacity="0.75"/>
<rect x="1029" y="175.2" width="4" height="1.5" fill="#70758c" opacity="0.75"/>
<rect x="998" y="177.2" width="5" height="1.5" fill="#c9ccd8" opacity="0.78"/>
<rect x="1000" y="179.2" width="1" height="1.5" fill="#70758c" opacity="0.75"/>
<rect x="1002" y="179.2" width="3" height="1.5" fill="#70758c" opacity="0.75"/>
<rect x="1006" y="179.2" width="7" height="1.5" fill="#70758c" opacity="0.75"/>
<rect x="1000" y="181.2" width="3" height="1.5" fill="#c9ccd8" opacity="0.78"/>
<rect x="1002" y="183.2" width="7" height="1.5" fill="#c9ccd8" opacity="0.78"/>
<rect x="1011" y="183.2" width="3" height="1.5" fill="#c9ccd8" opacity="0.78"/>
<rect x="1002" y="185.2" width="6" height="1.5" fill="#c9ccd8" opacity="0.78"/>
<rect x="1010" y="185.2" width="3" height="1.5" fill="#c9ccd8" opacity="0.78"/>
<rect x="1000" y="187.2" width="1" height="1.5" fill="#70758c" opacity="0.75"/>
<rect x="1002" y="187.2" width="4" height="1.5" fill="#70758c" opacity="0.75"/>
<rect x="1007" y="187.2" width="5" height="1.5" fill="#70758c" opacity="0.75"/>
<rect x="1013" y="187.2" width="4" height="1.5" fill="#70758c" opacity="0.75"/>
<rect x="1018" y="187.2" width="3" height="1.5" fill="#70758c" opacity="0.75"/>
<rect x="1022" y="187.2" width="5" height="1.5" fill="#70758c" opacity="0.75"/>
<rect x="1028" y="187.2" width="3" height="1.5" fill="#70758c" opacity="0.75"/>
<rect x="1032" y="187.2" width="4" height="1.5" fill="#70758c" opacity="0.75"/>
<rect x="1037" y="187.2" width="3" height="1.5" fill="#70758c" opacity="0.75"/>
<rect x="1000" y="189.2" width="6" height="1.5" fill="#c9ccd8" opacity="0.78"/>
<rect x="1002" y="191.2" width="3" height="1.5" fill="#c9ccd8" opacity="0.78"/>
<rect x="1007" y="191.2" width="16" height="1.5" fill="#c9ccd8" opacity="0.78"/>
<rect x="1002" y="193.2" width="5" height="1.5" fill="#c9ccd8" opacity="0.78"/>
<rect x="1009" y="193.2" width="1" height="1.5" fill="#f5cf1c" opacity="0.6"/>
<rect x="1011" y="193.2" width="1" height="1.5" fill="#e9a968" opacity="0.75"/>
<rect x="1013" y="193.2" width="2" height="1.5" fill="#e9a968" opacity="0.75"/>
<rect x="1016" y="193.2" width="1" height="1.5" fill="#f5cf1c" opacity="0.6"/>
<rect x="1000" y="195.2" width="7" height="1.5" fill="#c9ccd8" opacity="0.78"/>
<rect x="1002" y="197.2" width="1" height="1.5" fill="#70758c" opacity="0.75"/>
<rect x="1004" y="197.2" width="5" height="1.5" fill="#70758c" opacity="0.75"/>
<rect x="1010" y="197.2" width="3" height="1.5" fill="#70758c" opacity="0.75"/>
<rect x="1014" y="197.2" width="2" height="1.5" fill="#70758c" opacity="0.75"/>
<rect x="1017" y="197.2" width="3" height="1.5" fill="#70758c" opacity="0.75"/>
<rect x="1021" y="197.2" width="7" height="1.5" fill="#70758c" opacity="0.75"/>
<rect x="1002" y="199.2" width="4" height="1.5" fill="#c9ccd8" opacity="0.78"/>
<rect x="1004" y="201.2" width="3" height="1.5" fill="#c9ccd8" opacity="0.78"/>
<rect x="1006" y="203.2" width="5" height="1.5" fill="#c9ccd8" opacity="0.78"/>
<rect x="1013" y="203.2" width="3" height="1.5" fill="#e9a968" opacity="0.75"/>
<rect x="1006" y="205.2" width="10" height="1.5" fill="#c9ccd8" opacity="0.78"/>
<rect x="1018" y="205.2" width="2" height="1.5" fill="#c9ccd8" opacity="0.78"/>
<rect x="1002" y="207.2" width="1" height="1.5" fill="#70758c" opacity="0.75"/>
<rect x="1004" y="207.2" width="6" height="1.5" fill="#70758c" opacity="0.75"/>
<rect x="1011" y="207.2" width="4" height="1.5" fill="#70758c" opacity="0.75"/>
<rect x="1016" y="207.2" width="1" height="1.5" fill="#70758c" opacity="0.75"/>
<rect x="1018" y="207.2" width="3" height="1.5" fill="#70758c" opacity="0.75"/>
<rect x="1022" y="207.2" width="4" height="1.5" fill="#70758c" opacity="0.75"/>
<rect x="1027" y="207.2" width="3" height="1.5" fill="#70758c" opacity="0.75"/>
<rect x="1002" y="209.2" width="4" height="1.5" fill="#c9ccd8" opacity="0.78"/>
<rect x="1004" y="211.2" width="3" height="1.5" fill="#c9ccd8" opacity="0.78"/>
<rect x="1006" y="213.2" width="5" height="1.5" fill="#c9ccd8" opacity="0.78"/>
<rect x="1013" y="213.2" width="5" height="1.5" fill="#c9ccd8" opacity="0.78"/>
<rect x="1006" y="215.2" width="4" height="1.5" fill="#c9ccd8" opacity="0.78"/>
<rect x="1012" y="215.2" width="2" height="1.5" fill="#e9a968" opacity="0.75"/>
<rect x="1006" y="217.2" width="5" height="1.5" fill="#c9ccd8" opacity="0.78"/>
<rect x="1013" y="217.2" width="1" height="1.5" fill="#f5cf1c" opacity="0.6"/>
<rect x="1015" y="217.2" width="4" height="1.5" fill="#e9a968" opacity="0.75"/>
<rect x="1020" y="217.2" width="4" height="1.5" fill="#e9a968" opacity="0.75"/>
<rect x="1025" y="217.2" width="1" height="1.5" fill="#f5cf1c" opacity="0.6"/>
<rect x="1006" y="219.2" width="10" height="1.5" fill="#c9ccd8" opacity="0.78"/>
<rect x="1018" y="219.2" width="2" height="1.5" fill="#c9ccd8" opacity="0.78"/>
<rect x="1000" y="221.2" width="4" height="1.5" fill="#c9ccd8" opacity="0.78"/>
<rect x="1002" y="223.2" width="1" height="1.5" fill="#70758c" opacity="0.75"/>
<rect x="1004" y="223.2" width="5" height="1.5" fill="#70758c" opacity="0.75"/>
<rect x="1010" y="223.2" width="4" height="1.5" fill="#70758c" opacity="0.75"/>
<rect x="1015" y="223.2" width="4" height="1.5" fill="#70758c" opacity="0.75"/>
<rect x="1020" y="223.2" width="3" height="1.5" fill="#70758c" opacity="0.75"/>
<rect x="1024" y="223.2" width="4" height="1.5" fill="#70758c" opacity="0.75"/>
<rect x="1002" y="225.2" width="7" height="1.5" fill="#c9ccd8" opacity="0.78"/>
<rect x="1004" y="227.2" width="8" height="1.5" fill="#c9ccd8" opacity="0.78"/>
<rect x="1014" y="227.2" width="3" height="1.5" fill="#c9ccd8" opacity="0.78"/>
<rect x="1004" y="229.2" width="14" height="1.5" fill="#c9ccd8" opacity="0.78"/>
<rect x="1020" y="229.2" width="2" height="1.5" fill="#c9ccd8" opacity="0.78"/>
<rect x="996" y="231.2" width="1" height="1.5" fill="#70758c" opacity="0.75"/>
<rect x="998" y="231.2" width="6" height="1.5" fill="#70758c" opacity="0.75"/>
<rect x="1005" y="231.2" width="8" height="1.5" fill="#70758c" opacity="0.75"/>
<rect x="1014" y="231.2" width="6" height="1.5" fill="#70758c" opacity="0.75"/>
<rect x="1021" y="231.2" width="4" height="1.5" fill="#70758c" opacity="0.75"/>
<rect x="1026" y="231.2" width="1" height="1.5" fill="#70758c" opacity="0.75"/>
<rect x="1028" y="231.2" width="8" height="1.5" fill="#70758c" opacity="0.75"/>
<rect x="1037" y="231.2" width="8" height="1.5" fill="#70758c" opacity="0.75"/>
<rect x="996" y="233.2" width="6" height="1.5" fill="#c9ccd8" opacity="0.78"/>
<rect x="1004" y="233.2" width="3" height="1.5" fill="#e9a968" opacity="0.75"/>
<rect x="996" y="235.2" width="6" height="1.5" fill="#c9ccd8" opacity="0.78"/>
<rect x="1004" y="235.2" width="6" height="1.5" fill="#c9ccd8" opacity="0.78"/>
<rect x="998" y="237.2" width="3" height="1.5" fill="#c9ccd8" opacity="0.78"/>
<rect x="1003" y="237.2" width="16" height="1.5" fill="#c9ccd8" opacity="0.78"/>
<rect x="998" y="239.2" width="8" height="1.5" fill="#c9ccd8" opacity="0.78"/>
<rect x="1008" y="239.2" width="3" height="1.5" fill="#c9ccd8" opacity="0.78"/>
<rect x="994" y="241.2" width="8" height="1.5" fill="#c9ccd8" opacity="0.78"/>
<rect x="996" y="243.2" width="1" height="1.5" fill="#70758c" opacity="0.75"/>
<rect x="998" y="243.2" width="3" height="1.5" fill="#70758c" opacity="0.75"/>
<rect x="1002" y="243.2" width="3" height="1.5" fill="#70758c" opacity="0.75"/>
<rect x="1006" y="243.2" width="7" height="1.5" fill="#70758c" opacity="0.75"/>
<rect x="996" y="245.2" width="4" height="1.5" fill="#c9ccd8" opacity="0.78"/>
<rect x="1000" y="247.2" width="5" height="1.5" fill="#c9ccd8" opacity="0.78"/>
<rect x="1007" y="247.2" width="9" height="1.5" fill="#c9ccd8" opacity="0.78"/>
<rect x="1000" y="249.2" width="5" height="1.5" fill="#c9ccd8" opacity="0.78"/>
<rect x="1007" y="249.2" width="4" height="1.5" fill="#e9a968" opacity="0.75"/>
<rect x="1000" y="251.2" width="5" height="1.5" fill="#c9ccd8" opacity="0.78"/>
<rect x="1007" y="251.2" width="2" height="1.5" fill="#c9ccd8" opacity="0.78"/>
<rect x="1010" y="251.2" width="2" height="1.5" fill="#c9ccd8" opacity="0.78"/>
<rect x="996" y="253.2" width="1" height="1.5" fill="#70758c" opacity="0.75"/>
<rect x="998" y="253.2" width="3" height="1.5" fill="#70758c" opacity="0.75"/>
<rect x="1002" y="253.2" width="9" height="1.5" fill="#70758c" opacity="0.75"/>
<rect x="1012" y="253.2" width="4" height="1.5" fill="#70758c" opacity="0.75"/>
<rect x="1017" y="253.2" width="1" height="1.5" fill="#70758c" opacity="0.75"/>
<rect x="1019" y="253.2" width="3" height="1.5" fill="#70758c" opacity="0.75"/>
<rect x="1023" y="253.2" width="7" height="1.5" fill="#70758c" opacity="0.75"/>
<rect x="1031" y="253.2" width="2" height="1.5" fill="#70758c" opacity="0.75"/>
<rect x="1034" y="253.2" width="4" height="1.5" fill="#70758c" opacity="0.75"/>
<rect x="1039" y="253.2" width="3" height="1.5" fill="#70758c" opacity="0.75"/>
<rect x="1043" y="253.2" width="8" height="1.5" fill="#70758c" opacity="0.75"/>
<rect x="996" y="255.2" width="5" height="1.5" fill="#c9ccd8" opacity="0.78"/>
<rect x="1000" y="257.2" width="5" height="1.5" fill="#c9ccd8" opacity="0.78"/>
<rect x="1007" y="257.2" width="9" height="1.5" fill="#c9ccd8" opacity="0.78"/>
<rect x="1000" y="259.2" width="5" height="1.5" fill="#c9ccd8" opacity="0.78"/>
<rect x="1007" y="259.2" width="4" height="1.5" fill="#e9a968" opacity="0.75"/>
<rect x="1000" y="261.2" width="5" height="1.5" fill="#c9ccd8" opacity="0.78"/>
<rect x="1007" y="261.2" width="13" height="1.5" fill="#c9ccd8" opacity="0.78"/>
<rect x="996" y="263.2" width="1" height="1.5" fill="#70758c" opacity="0.75"/>
<rect x="998" y="263.2" width="2" height="1.5" fill="#70758c" opacity="0.75"/>
<rect x="1001" y="263.2" width="4" height="1.5" fill="#70758c" opacity="0.75"/>
<rect x="1006" y="263.2" width="7" height="1.5" fill="#70758c" opacity="0.75"/>
<rect x="996" y="265.2" width="6" height="1.5" fill="#c9ccd8" opacity="0.78"/>
<rect x="1000" y="267.2" width="5" height="1.5" fill="#c9ccd8" opacity="0.78"/>
<rect x="1007" y="267.2" width="7" height="1.5" fill="#c9ccd8" opacity="0.78"/>
<rect x="1000" y="269.2" width="10" height="1.5" fill="#c9ccd8" opacity="0.78"/>
<rect x="1012" y="269.2" width="5" height="1.5" fill="#c9ccd8" opacity="0.78"/>
<rect x="1000" y="271.2" width="6" height="1.5" fill="#c9ccd8" opacity="0.78"/>
<rect x="1002" y="273.2" width="1" height="1.5" fill="#c9ccd8" opacity="0.78"/>
<rect x="1004" y="273.2" width="3" height="1.5" fill="#c9ccd8" opacity="0.78"/>
<rect x="1009" y="273.2" width="15" height="1.5" fill="#c9ccd8" opacity="0.78"/>
<rect x="1004" y="275.2" width="5" height="1.5" fill="#c9ccd8" opacity="0.78"/>
<rect x="1011" y="275.2" width="13" height="1.5" fill="#c9ccd8" opacity="0.78"/>
<rect x="1002" y="277.2" width="1" height="1.5" fill="#c9ccd8" opacity="0.78"/>
<rect x="1004" y="277.2" width="3" height="1.5" fill="#c9ccd8" opacity="0.78"/>
<rect x="1009" y="277.2" width="14" height="1.5" fill="#c9ccd8" opacity="0.78"/>
<rect x="1004" y="279.2" width="5" height="1.5" fill="#c9ccd8" opacity="0.78"/>
<rect x="1011" y="279.2" width="13" height="1.5" fill="#c9ccd8" opacity="0.78"/>
<rect x="1002" y="281.2" width="1" height="1.5" fill="#c9ccd8" opacity="0.78"/>
<rect x="1004" y="281.2" width="3" height="1.5" fill="#c9ccd8" opacity="0.78"/>
<rect x="1009" y="281.2" width="16" height="1.5" fill="#c9ccd8" opacity="0.78"/>
<rect x="1004" y="283.2" width="5" height="1.5" fill="#c9ccd8" opacity="0.78"/>
<rect x="1011" y="283.2" width="13" height="1.5" fill="#c9ccd8" opacity="0.78"/>
<rect x="1002" y="285.2" width="1" height="1.5" fill="#c9ccd8" opacity="0.78"/>
<rect x="1004" y="285.2" width="3" height="1.5" fill="#c9ccd8" opacity="0.78"/>
<rect x="1009" y="285.2" width="16" height="1.5" fill="#c9ccd8" opacity="0.78"/>
<rect x="1004" y="287.2" width="5" height="1.5" fill="#c9ccd8" opacity="0.78"/>
<rect x="1011" y="287.2" width="13" height="1.5" fill="#c9ccd8" opacity="0.78"/>
<rect x="1002" y="289.2" width="1" height="1.5" fill="#c9ccd8" opacity="0.78"/>
<rect x="1004" y="289.2" width="3" height="1.5" fill="#c9ccd8" opacity="0.78"/>
<rect x="1009" y="289.2" width="15" height="1.5" fill="#c9ccd8" opacity="0.78"/>
<rect x="1004" y="291.2" width="5" height="1.5" fill="#c9ccd8" opacity="0.78"/>
<rect x="1011" y="291.2" width="13" height="1.5" fill="#c9ccd8" opacity="0.78"/>
<rect x="1002" y="293.2" width="1" height="1.5" fill="#c9ccd8" opacity="0.78"/>
<rect x="1004" y="293.2" width="3" height="1.5" fill="#c9ccd8" opacity="0.78"/>
<rect x="1009" y="293.2" width="15" height="1.5" fill="#c9ccd8" opacity="0.78"/>
<rect x="1004" y="295.2" width="5" height="1.5" fill="#c9ccd8" opacity="0.78"/>
<rect x="1011" y="295.2" width="13" height="1.5" fill="#c9ccd8" opacity="0.78"/>
<rect x="1002" y="297.2" width="1" height="1.5" fill="#c9ccd8" opacity="0.78"/>
<rect x="1004" y="297.2" width="3" height="1.5" fill="#c9ccd8" opacity="0.78"/>
<rect x="1009" y="297.2" width="22" height="1.5" fill="#c9ccd8" opacity="0.78"/>
<rect x="1004" y="299.2" width="5" height="1.5" fill="#c9ccd8" opacity="0.78"/>
<rect x="1011" y="299.2" width="13" height="1.5" fill="#c9ccd8" opacity="0.78"/>
<rect x="1002" y="301.2" width="1" height="1.5" fill="#c9ccd8" opacity="0.78"/>
<rect x="1004" y="301.2" width="3" height="1.5" fill="#c9ccd8" opacity="0.78"/>
<rect x="1009" y="301.2" width="22" height="1.5" fill="#c9ccd8" opacity="0.78"/>
<rect x="1004" y="303.2" width="5" height="1.5" fill="#c9ccd8" opacity="0.78"/>
<rect x="1011" y="303.2" width="13" height="1.5" fill="#c9ccd8" opacity="0.78"/>
<rect x="1002" y="305.2" width="1" height="1.5" fill="#c9ccd8" opacity="0.78"/>
<rect x="1004" y="305.2" width="3" height="1.5" fill="#c9ccd8" opacity="0.78"/>
<rect x="1009" y="305.2" width="23" height="1.5" fill="#c9ccd8" opacity="0.78"/>
<rect x="1004" y="307.2" width="5" height="1.5" fill="#c9ccd8" opacity="0.78"/>
<rect x="1011" y="307.2" width="13" height="1.5" fill="#c9ccd8" opacity="0.78"/>
<rect x="1002" y="309.2" width="1" height="1.5" fill="#c9ccd8" opacity="0.78"/>
<rect x="1004" y="309.2" width="3" height="1.5" fill="#c9ccd8" opacity="0.78"/>
<rect x="1009" y="309.2" width="23" height="1.5" fill="#c9ccd8" opacity="0.78"/>
<rect x="1004" y="311.2" width="5" height="1.5" fill="#c9ccd8" opacity="0.78"/>
<rect x="1011" y="311.2" width="13" height="1.5" fill="#c9ccd8" opacity="0.78"/>
<rect x="1002" y="313.2" width="1" height="1.5" fill="#c9ccd8" opacity="0.78"/>
<rect x="1004" y="313.2" width="3" height="1.5" fill="#c9ccd8" opacity="0.78"/>
<rect x="1009" y="313.2" width="21" height="1.5" fill="#c9ccd8" opacity="0.78"/>
<rect x="1004" y="315.2" width="5" height="1.5" fill="#c9ccd8" opacity="0.78"/>
<rect x="1011" y="315.2" width="13" height="1.5" fill="#c9ccd8" opacity="0.78"/>
<rect x="1002" y="317.2" width="1" height="1.5" fill="#c9ccd8" opacity="0.78"/>
<rect x="1004" y="317.2" width="3" height="1.5" fill="#c9ccd8" opacity="0.78"/>
<rect x="1009" y="317.2" width="22" height="1.5" fill="#c9ccd8" opacity="0.78"/>
<rect x="1004" y="319.2" width="5" height="1.5" fill="#c9ccd8" opacity="0.78"/>
<rect x="1011" y="319.2" width="13" height="1.5" fill="#c9ccd8" opacity="0.78"/>
<rect x="1002" y="321.2" width="1" height="1.5" fill="#c9ccd8" opacity="0.78"/>
<rect x="1004" y="321.2" width="3" height="1.5" fill="#c9ccd8" opacity="0.78"/>
<rect x="1009" y="321.2" width="25" height="1.5" fill="#c9ccd8" opacity="0.78"/>
<rect x="1004" y="323.2" width="5" height="1.5" fill="#c9ccd8" opacity="0.78"/>
<rect x="1011" y="323.2" width="13" height="1.5" fill="#c9ccd8" opacity="0.78"/>
<rect x="1002" y="325.2" width="1" height="1.5" fill="#c9ccd8" opacity="0.78"/>
<rect x="1004" y="325.2" width="3" height="1.5" fill="#c9ccd8" opacity="0.78"/>
<rect x="1009" y="325.2" width="21" height="1.5" fill="#c9ccd8" opacity="0.78"/>
<rect x="1004" y="327.2" width="5" height="1.5" fill="#c9ccd8" opacity="0.78"/>
<rect x="1011" y="327.2" width="13" height="1.5" fill="#c9ccd8" opacity="0.78"/>
<rect x="1002" y="329.2" width="1" height="1.5" fill="#c9ccd8" opacity="0.78"/>
<rect x="1004" y="329.2" width="3" height="1.5" fill="#c9ccd8" opacity="0.78"/>
<rect x="1009" y="329.2" width="26" height="1.5" fill="#c9ccd8" opacity="0.78"/>
<rect x="1004" y="331.2" width="5" height="1.5" fill="#c9ccd8" opacity="0.78"/>
<rect x="1011" y="331.2" width="13" height="1.5" fill="#c9ccd8" opacity="0.78"/>
<rect x="1002" y="333.2" width="1" height="1.5" fill="#c9ccd8" opacity="0.78"/>
<rect x="1004" y="333.2" width="3" height="1.5" fill="#c9ccd8" opacity="0.78"/>
<rect x="1009" y="333.2" width="26" height="1.5" fill="#c9ccd8" opacity="0.78"/>
<rect x="1004" y="335.2" width="5" height="1.5" fill="#c9ccd8" opacity="0.78"/>
<rect x="1011" y="335.2" width="13" height="1.5" fill="#c9ccd8" opacity="0.78"/>
<rect x="1002" y="337.2" width="1" height="1.5" fill="#c9ccd8" opacity="0.78"/>
<rect x="1004" y="337.2" width="3" height="1.5" fill="#c9ccd8" opacity="0.78"/>
<rect x="1009" y="337.2" width="26" height="1.5" fill="#c9ccd8" opacity="0.78"/>
<rect x="1004" y="339.2" width="5" height="1.5" fill="#c9ccd8" opacity="0.78"/>
<rect x="1011" y="339.2" width="13" height="1.5" fill="#c9ccd8" opacity="0.78"/>
<rect x="1002" y="341.2" width="1" height="1.5" fill="#c9ccd8" opacity="0.78"/>
<rect x="1004" y="341.2" width="3" height="1.5" fill="#c9ccd8" opacity="0.78"/>
<rect x="1009" y="341.2" width="19" height="1.5" fill="#c9ccd8" opacity="0.78"/>
<rect x="1004" y="343.2" width="5" height="1.5" fill="#c9ccd8" opacity="0.78"/>
<rect x="1011" y="343.2" width="13" height="1.5" fill="#c9ccd8" opacity="0.78"/>
<rect x="1002" y="345.2" width="1" height="1.5" fill="#c9ccd8" opacity="0.78"/>
<rect x="1004" y="345.2" width="3" height="1.5" fill="#c9ccd8" opacity="0.78"/>
<rect x="1009" y="345.2" width="19" height="1.5" fill="#c9ccd8" opacity="0.78"/>
<rect x="1004" y="347.2" width="5" height="1.5" fill="#c9ccd8" opacity="0.78"/>
<rect x="1011" y="347.2" width="13" height="1.5" fill="#c9ccd8" opacity="0.78"/>
<rect x="1002" y="349.2" width="1" height="1.5" fill="#c9ccd8" opacity="0.78"/>
<rect x="1004" y="349.2" width="3" height="1.5" fill="#c9ccd8" opacity="0.78"/>
<rect x="1009" y="349.2" width="19" height="1.5" fill="#c9ccd8" opacity="0.78"/>
<rect x="1004" y="351.2" width="5" height="1.5" fill="#c9ccd8" opacity="0.78"/>
<rect x="1011" y="351.2" width="13" height="1.5" fill="#c9ccd8" opacity="0.78"/>
<rect x="1002" y="353.2" width="1" height="1.5" fill="#c9ccd8" opacity="0.78"/>
<rect x="1004" y="353.2" width="3" height="1.5" fill="#c9ccd8" opacity="0.78"/>
<rect x="1009" y="353.2" width="15" height="1.5" fill="#c9ccd8" opacity="0.78"/>
<rect x="1004" y="355.2" width="5" height="1.5" fill="#c9ccd8" opacity="0.78"/>
<rect x="1011" y="355.2" width="13" height="1.5" fill="#c9ccd8" opacity="0.78"/>
<rect x="1002" y="357.2" width="1" height="1.5" fill="#c9ccd8" opacity="0.78"/>
<rect x="1004" y="357.2" width="3" height="1.5" fill="#c9ccd8" opacity="0.78"/>
<rect x="1009" y="357.2" width="18" height="1.5" fill="#c9ccd8" opacity="0.78"/>
<rect x="1004" y="359.2" width="5" height="1.5" fill="#c9ccd8" opacity="0.78"/>
<rect x="1011" y="359.2" width="13" height="1.5" fill="#c9ccd8" opacity="0.78"/>
<rect x="1000" y="361.2" width="6" height="1.5" fill="#c9ccd8" opacity="0.78"/>
<rect x="1008" y="361.2" width="1" height="1.5" fill="#e9a968" opacity="0.75"/>
<rect x="996" y="363.2" width="1" height="1.5" fill="#70758c" opacity="0.75"/>
<rect x="998" y="363.2" width="9" height="1.5" fill="#70758c" opacity="0.75"/>
<rect x="1008" y="363.2" width="6" height="1.5" fill="#70758c" opacity="0.75"/>
<rect x="1015" y="363.2" width="8" height="1.5" fill="#70758c" opacity="0.75"/>
<rect x="1024" y="363.2" width="7" height="1.5" fill="#70758c" opacity="0.75"/>
<rect x="1032" y="363.2" width="3" height="1.5" fill="#70758c" opacity="0.75"/>
<rect x="1036" y="363.2" width="4" height="1.5" fill="#70758c" opacity="0.75"/>
<rect x="996" y="365.2" width="6" height="1.5" fill="#c9ccd8" opacity="0.78"/>
<rect x="1000" y="367.2" width="5" height="1.5" fill="#c9ccd8" opacity="0.78"/>
<rect x="1007" y="367.2" width="5" height="1.5" fill="#c9ccd8" opacity="0.78"/>
<rect x="1000" y="369.2" width="10" height="1.5" fill="#c9ccd8" opacity="0.78"/>
<rect x="1012" y="369.2" width="8" height="1.5" fill="#c9ccd8" opacity="0.78"/>
<rect x="1000" y="371.2" width="5" height="1.5" fill="#c9ccd8" opacity="0.78"/>
<rect x="1007" y="371.2" width="4" height="1.5" fill="#c9ccd8" opacity="0.78"/>
<rect x="994" y="373.2" width="4" height="1.5" fill="#c9ccd8" opacity="0.78"/>
<rect x="996" y="375.2" width="9" height="1.5" fill="#c9ccd8" opacity="0.78"/>
<rect x="998" y="377.2" width="9" height="1.5" fill="#c9ccd8" opacity="0.78"/>
<rect x="1000" y="379.2" width="5" height="1.5" fill="#c9ccd8" opacity="0.78"/>
<rect x="1002" y="381.2" width="8" height="1.5" fill="#c9ccd8" opacity="0.78"/>
<rect x="1004" y="383.2" width="5" height="1.5" fill="#c9ccd8" opacity="0.78"/>
<rect x="998" y="385.2" width="11" height="1.5" fill="#c9ccd8" opacity="0.78"/>
<rect x="1000" y="387.2" width="1" height="1.5" fill="#70758c" opacity="0.75"/>
<rect x="1002" y="387.2" width="5" height="1.5" fill="#70758c" opacity="0.75"/>
<rect x="1008" y="387.2" width="3" height="1.5" fill="#70758c" opacity="0.75"/>
<rect x="1012" y="387.2" width="4" height="1.5" fill="#70758c" opacity="0.75"/>
<rect x="1000" y="389.2" width="12" height="1.5" fill="#c9ccd8" opacity="0.78"/>
<rect x="1002" y="391.2" width="5" height="1.5" fill="#c9ccd8" opacity="0.78"/>
<rect x="1009" y="391.2" width="4" height="1.5" fill="#c9ccd8" opacity="0.78"/>
<rect x="1002" y="393.2" width="6" height="1.5" fill="#c9ccd8" opacity="0.78"/>
<rect x="1010" y="393.2" width="4" height="1.5" fill="#e9a968" opacity="0.75"/>
<rect x="1002" y="395.2" width="7" height="1.5" fill="#c9ccd8" opacity="0.78"/>
<rect x="1004" y="397.2" width="7" height="1.5" fill="#c9ccd8" opacity="0.78"/>
<rect x="1013" y="397.2" width="4" height="1.5" fill="#e9a968" opacity="0.75"/>
<rect x="1004" y="399.2" width="7" height="1.5" fill="#c9ccd8" opacity="0.78"/>
<rect x="1013" y="399.2" width="5" height="1.5" fill="#e9a968" opacity="0.75"/>
<rect x="1004" y="401.2" width="7" height="1.5" fill="#c9ccd8" opacity="0.78"/>
<rect x="1013" y="401.2" width="4" height="1.5" fill="#e9a968" opacity="0.75"/>
<rect x="1004" y="403.2" width="4" height="1.5" fill="#c9ccd8" opacity="0.78"/>
<rect x="1010" y="403.2" width="16" height="1.5" fill="#e9a968" opacity="0.75"/>
<rect x="1004" y="405.2" width="3" height="1.5" fill="#c9ccd8" opacity="0.78"/>
<rect x="1009" y="405.2" width="12" height="1.5" fill="#e9a968" opacity="0.75"/>
<rect x="1000" y="407.2" width="1" height="1.5" fill="#70758c" opacity="0.75"/>
<rect x="1002" y="407.2" width="4" height="1.5" fill="#70758c" opacity="0.75"/>
<rect x="1007" y="407.2" width="3" height="1.5" fill="#70758c" opacity="0.75"/>
<rect x="1011" y="407.2" width="2" height="1.5" fill="#70758c" opacity="0.75"/>
<rect x="1014" y="407.2" width="3" height="1.5" fill="#70758c" opacity="0.75"/>
<rect x="1018" y="407.2" width="5" height="1.5" fill="#70758c" opacity="0.75"/>
<rect x="1000" y="409.2" width="6" height="1.5" fill="#c9ccd8" opacity="0.78"/>
<rect x="1002" y="411.2" width="5" height="1.5" fill="#c9ccd8" opacity="0.78"/>
<rect x="1009" y="411.2" width="5" height="1.5" fill="#c9ccd8" opacity="0.78"/>
<rect x="1002" y="413.2" width="6" height="1.5" fill="#c9ccd8" opacity="0.78"/>
<rect x="1010" y="413.2" width="4" height="1.5" fill="#e9a968" opacity="0.75"/>
<rect x="1002" y="415.2" width="7" height="1.5" fill="#c9ccd8" opacity="0.78"/>
<rect x="1004" y="417.2" width="4" height="1.5" fill="#c9ccd8" opacity="0.78"/>
<rect x="1010" y="417.2" width="12" height="1.5" fill="#e9a968" opacity="0.75"/>
<rect x="1004" y="419.2" width="3" height="1.5" fill="#c9ccd8" opacity="0.78"/>
<rect x="1009" y="419.2" width="12" height="1.5" fill="#e9a968" opacity="0.75"/>
<rect x="1002" y="421.2" width="7" height="1.5" fill="#c9ccd8" opacity="0.78"/>
<rect x="1004" y="423.2" width="6" height="1.5" fill="#c9ccd8" opacity="0.78"/>
<rect x="1012" y="423.2" width="1" height="1.5" fill="#f5cf1c" opacity="0.6"/>
<rect x="1014" y="423.2" width="1" height="1.5" fill="#e9a968" opacity="0.75"/>
<rect x="1016" y="423.2" width="2" height="1.5" fill="#e9a968" opacity="0.75"/>
<rect x="1019" y="423.2" width="1" height="1.5" fill="#f5cf1c" opacity="0.6"/>
<rect x="1000" y="425.2" width="1" height="1.5" fill="#70758c" opacity="0.75"/>
<rect x="1002" y="425.2" width="3" height="1.5" fill="#70758c" opacity="0.75"/>
<rect x="1006" y="425.2" width="3" height="1.5" fill="#70758c" opacity="0.75"/>
<rect x="1010" y="425.2" width="6" height="1.5" fill="#70758c" opacity="0.75"/>
<rect x="1017" y="425.2" width="3" height="1.5" fill="#70758c" opacity="0.75"/>
<rect x="1021" y="425.2" width="4" height="1.5" fill="#70758c" opacity="0.75"/>
<rect x="1000" y="427.2" width="9" height="1.5" fill="#c9ccd8" opacity="0.78"/>
<rect x="1002" y="429.2" width="5" height="1.5" fill="#c9ccd8" opacity="0.78"/>
<rect x="1009" y="429.2" width="8" height="1.5" fill="#c9ccd8" opacity="0.78"/>
<rect x="1002" y="431.2" width="7" height="1.5" fill="#c9ccd8" opacity="0.78"/>
<rect x="1004" y="433.2" width="11" height="1.5" fill="#c9ccd8" opacity="0.78"/>
<rect x="1017" y="433.2" width="5" height="1.5" fill="#e9a968" opacity="0.75"/>
<rect x="1002" y="435.2" width="6" height="1.5" fill="#c9ccd8" opacity="0.78"/>
<rect x="1004" y="437.2" width="20" height="1.5" fill="#c9ccd8" opacity="0.78"/>
<rect x="1026" y="437.2" width="18" height="1.5" fill="#c9ccd8" opacity="0.78"/>
<rect x="1045" y="437.2" width="25" height="1.5" fill="#c9ccd8" opacity="0.78"/>
<rect x="1004" y="439.2" width="6" height="1.5" fill="#c9ccd8" opacity="0.78"/>
<rect x="1012" y="439.2" width="1" height="1.5" fill="#f5cf1c" opacity="0.6"/>
<rect x="1014" y="439.2" width="1" height="1.5" fill="#e9a968" opacity="0.75"/>
<rect x="1016" y="439.2" width="2" height="1.5" fill="#e9a968" opacity="0.75"/>
<rect x="1019" y="439.2" width="1" height="1.5" fill="#f5cf1c" opacity="0.6"/>
<rect x="1004" y="441.2" width="7" height="1.5" fill="#c9ccd8" opacity="0.78"/>
<rect x="1013" y="441.2" width="3" height="1.5" fill="#e9a968" opacity="0.75"/>
<rect x="1000" y="443.2" width="1" height="1.5" fill="#70758c" opacity="0.75"/>
<rect x="1002" y="443.2" width="4" height="1.5" fill="#70758c" opacity="0.75"/>
<rect x="1007" y="443.2" width="4" height="1.5" fill="#70758c" opacity="0.75"/>
<rect x="1000" y="445.2" width="5" height="1.5" fill="#c9ccd8" opacity="0.78"/>
<rect x="1002" y="447.2" width="5" height="1.5" fill="#c9ccd8" opacity="0.78"/>
<rect x="1009" y="447.2" width="4" height="1.5" fill="#c9ccd8" opacity="0.78"/>
<rect x="1002" y="449.2" width="7" height="1.5" fill="#c9ccd8" opacity="0.78"/>
<rect x="1004" y="451.2" width="5" height="1.5" fill="#c9ccd8" opacity="0.78"/>
<rect x="1011" y="451.2" width="3" height="1.5" fill="#e9a968" opacity="0.75"/>
<rect x="1004" y="453.2" width="4" height="1.5" fill="#c9ccd8" opacity="0.78"/>
<rect x="1010" y="453.2" width="2" height="1.5" fill="#c9ccd8" opacity="0.78"/>
<rect x="1004" y="455.2" width="4" height="1.5" fill="#c9ccd8" opacity="0.78"/>
<rect x="1010" y="455.2" width="2" height="1.5" fill="#c9ccd8" opacity="0.78"/>
<rect x="1002" y="457.2" width="6" height="1.5" fill="#c9ccd8" opacity="0.78"/>
<rect x="1004" y="459.2" width="20" height="1.5" fill="#c9ccd8" opacity="0.78"/>
<rect x="1026" y="459.2" width="18" height="1.5" fill="#c9ccd8" opacity="0.78"/>
<rect x="1045" y="459.2" width="25" height="1.5" fill="#c9ccd8" opacity="0.78"/>
<rect x="1004" y="461.2" width="6" height="1.5" fill="#c9ccd8" opacity="0.78"/>
<rect x="1012" y="461.2" width="1" height="1.5" fill="#f5cf1c" opacity="0.6"/>
<rect x="1014" y="461.2" width="2" height="1.5" fill="#e9a968" opacity="0.75"/>
<rect x="1017" y="461.2" width="3" height="1.5" fill="#e9a968" opacity="0.75"/>
<rect x="1021" y="461.2" width="1" height="1.5" fill="#f5cf1c" opacity="0.6"/>
<rect x="1004" y="463.2" width="7" height="1.5" fill="#c9ccd8" opacity="0.78"/>
<rect x="1013" y="463.2" width="2" height="1.5" fill="#e9a968" opacity="0.75"/>
<rect x="1000" y="465.2" width="1" height="1.5" fill="#70758c" opacity="0.75"/>
<rect x="1002" y="465.2" width="4" height="1.5" fill="#70758c" opacity="0.75"/>
<rect x="1007" y="465.2" width="3" height="1.5" fill="#70758c" opacity="0.75"/>
<rect x="1011" y="465.2" width="5" height="1.5" fill="#70758c" opacity="0.75"/>
<rect x="1017" y="465.2" width="6" height="1.5" fill="#70758c" opacity="0.75"/>
<rect x="1000" y="467.2" width="6" height="1.5" fill="#c9ccd8" opacity="0.78"/>
<rect x="1002" y="469.2" width="5" height="1.5" fill="#c9ccd8" opacity="0.78"/>
<rect x="1009" y="469.2" width="6" height="1.5" fill="#c9ccd8" opacity="0.78"/>
<rect x="1002" y="471.2" width="7" height="1.5" fill="#c9ccd8" opacity="0.78"/>
<rect x="1004" y="473.2" width="5" height="1.5" fill="#c9ccd8" opacity="0.78"/>
<rect x="1011" y="473.2" width="3" height="1.5" fill="#c9ccd8" opacity="0.78"/>
<rect x="1004" y="475.2" width="3" height="1.5" fill="#c9ccd8" opacity="0.78"/>
<rect x="1009" y="475.2" width="3" height="1.5" fill="#c9ccd8" opacity="0.78"/>
<rect x="1002" y="477.2" width="6" height="1.5" fill="#c9ccd8" opacity="0.78"/>
<rect x="1004" y="479.2" width="20" height="1.5" fill="#c9ccd8" opacity="0.78"/>
<rect x="1026" y="479.2" width="17" height="1.5" fill="#c9ccd8" opacity="0.78"/>
<rect x="1044" y="479.2" width="24" height="1.5" fill="#c9ccd8" opacity="0.78"/>
<rect x="1004" y="481.2" width="6" height="1.5" fill="#c9ccd8" opacity="0.78"/>
<rect x="1012" y="481.2" width="1" height="1.5" fill="#f5cf1c" opacity="0.6"/>
<rect x="1014" y="481.2" width="1" height="1.5" fill="#e9a968" opacity="0.75"/>
<rect x="1016" y="481.2" width="2" height="1.5" fill="#e9a968" opacity="0.75"/>
<rect x="1019" y="481.2" width="1" height="1.5" fill="#f5cf1c" opacity="0.6"/>
<rect x="1004" y="483.2" width="7" height="1.5" fill="#c9ccd8" opacity="0.78"/>
<rect x="1013" y="483.2" width="3" height="1.5" fill="#e9a968" opacity="0.75"/>
</g>
<rect x="994" y="485" width="23" height="2" fill="#2c5a8c"/>
<rect x="994" y="487" width="19" height="2" fill="#2c5a8c"/>
<rect x="994" y="489" width="27" height="2" fill="#2c5a8c"/>
<rect x="994" y="491" width="15" height="2" fill="#2c5a8c"/>
<rect x="994" y="493" width="36" height="2" fill="#2c5a8c"/>
</svg>
<div class="abs" style="left:1084px;top:93px;width:1px;height:439px;background:#3a3b49"></div>
<div class="abs" style="left:1084px;top:93px;width:12px;height:1px;background:#3a3b49"></div>
<div class="abs" style="left:1085px;top:480px;width:11px;height:2px;background:#9a9ba6"></div>

<!-- status bar -->
<div id="status" class="abs">
  <svg style="left:14px;top:3px" width="16" height="16" viewBox="0 0 16 16" fill="none" stroke="#b4b9c9" stroke-width="1.100"><circle cx="5.900" cy="3.200" r="1.600"/><circle cx="5.900" cy="13" r="1.600"/><circle cx="12.100" cy="5.300" r="1.600"/><path d="M5.900 4.800v6.600M12.100 6.900c0 2.800-6.200 1.800-6.200 4.500"/></svg>
  <span style="left:33.500px;letter-spacing:0.200px">main</span>
  <svg style="left:76px;top:3px" width="16" height="16" viewBox="0 0 16 16" fill="none" stroke="#9a9eae" stroke-width="1" stroke-linejoin="round" stroke-linecap="round"><path d="M5.600 11.800H4.500a2.500 2.500 0 0 1-.5-4.950 3.800 3.800 0 0 1 7.400-.3 2.700 2.700 0 0 1 .3 5.250H10.400"/><path d="M7.800 12.500v-3.300M6 9.500l1.800-2.100 1.800 2.100z" fill="#9a9eae"/></svg>
  <svg style="left:105px;top:3px" width="16" height="16" viewBox="0 0 16 16" fill="none" stroke="#b4b9c9" stroke-width="1.100" stroke-linecap="round"><circle cx="8.400" cy="8.100" r="5.300"/><path d="M6.300 6l4.200 4.200M10.500 6l-4.200 4.200"/></svg>
  <span style="left:124.200px">0</span>
  <svg style="left:134px;top:3px" width="16" height="16" viewBox="0 0 16 16" fill="none" stroke="#b4b9c9" stroke-width="1.100" stroke-linejoin="round" stroke-linecap="round"><path d="M7.900 3.400 13.500 12.800H2.300z"/><path d="M7.900 6.800v3.200M7.900 11.300v.1"/></svg>
  <span style="left:152.300px">0</span>
  <span style="left:657.500px;letter-spacing:0.450px">Ln 220, Col 1 (117 selected)</span>
  <span style="left:836.900px;letter-spacing:0.190px">Spaces: 2</span>
  <span style="left:908.900px;letter-spacing:0.300px">UTF-8</span>
  <span style="left:961.500px;letter-spacing:-0.700px">LF</span>
  <span style="left:991.200px;letter-spacing:-0.100px">YAML</span>
  <svg style="left:1038px;top:3px" width="16" height="16" viewBox="0 0 16 16" fill="none" stroke="#a3a7b6" stroke-width="1" stroke-linejoin="round"><path d="M5 4.500v-2h8.700v6h-2.200l-2 1.800v-1.800"/><circle cx="5.600" cy="7.700" r="2.100"/><path d="M2 14.300c0-2.600 1.600-4.100 3.600-4.100s3.600 1.500 3.600 4.100"/></svg>
  <svg style="left:1069px;top:3px" width="16" height="16" viewBox="0 0 16 16" fill="none" stroke="#a3a7b6" stroke-width="1" stroke-linejoin="round"><path d="M2.800 12.200v-.6l1.200-1.200V6.600a3.600 3.600 0 0 1 7.200 0v3.800l1.200 1.200v.6z"/><path d="M6.300 12.600a1.400 1.400 0 0 0 2.600 0"/></svg>
</div>

</div></div>
<div id="winborder"></div>
</body>
</html>
